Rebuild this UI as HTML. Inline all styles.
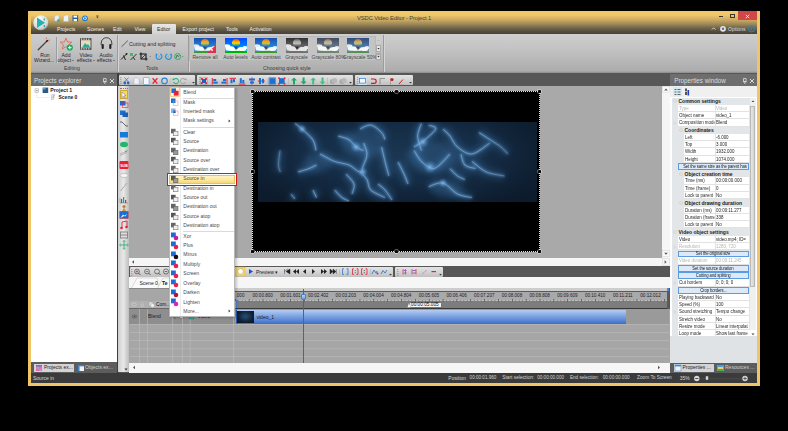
<!DOCTYPE html>
<html><head><meta charset="utf-8">
<style>
*{margin:0;padding:0;box-sizing:border-box}
html,body{width:788px;height:431px;overflow:hidden;background:#000;font-family:"Liberation Sans",sans-serif}
.a{position:absolute}
.t{position:absolute;white-space:nowrap;line-height:1}
svg{position:absolute;overflow:visible}
#win{left:28px;top:11px;width:732px;height:374.6px;background:#f0c665}
#title{left:31px;top:11px;width:726px;height:23px;background:linear-gradient(#f2c96a 0%,#efc768 18%,#c9a862 40%,#9a8656 58%,#6c6149 76%,#4f493b 92%,#47433a 100%)}
#ribbon{left:31px;top:34px;width:726px;height:39px;background:linear-gradient(#cecece,#c2c2c2 40%,#adadad 95%,#8a8a8a)}
#band{left:31px;top:73px;width:726px;height:300px;background:#575757}
#status{left:31px;top:373px;width:726px;height:9.5px;background:#3b3b3b}
.tab{font-size:5.1px;color:#f4f0e8;top:27.2px}
.rb{font-size:5.05px;color:#28242e;text-align:center}
.gl{font-size:5.2px;color:#3c3c3c;top:66px}
.sep{position:absolute;width:1px;background:#9c9c9c;box-shadow:1px 0 0 #d4d4d4}
.th{position:absolute;width:22px;height:15px;top:38px}
.thl{font-size:5px;color:#444;top:55px;text-align:center;width:31px}
/* projects explorer */
#pehead{left:31px;top:74px;width:86px;height:12px;background:#6e6e6e}
#petree{left:31px;top:86px;width:86px;height:276px;background:#fff}
#petabs{left:31px;top:362px;width:86px;height:11px;background:#5d5d5d}
/* center */
#vstrip{left:118px;top:86px;width:11px;height:286px;background:linear-gradient(90deg,#cfcfcf,#e8e8e8 50%,#bdbdbd)}
#canvas{left:129px;top:86px;width:533px;height:171.5px;background:#a9a9a9}
#vscroll{left:662px;top:86px;width:8px;height:171.5px;background:#f6f6f6}
#hscroll{left:129px;top:257.5px;width:541px;height:8.2px;background:#f6f6f6}
#tlband{left:129px;top:265.7px;width:541px;height:11.3px;background:#575757}
#tltabs{left:129px;top:277px;width:541px;height:10.5px;background:#f6f6f6}
#ruler{left:129px;top:289px;width:540px;height:13px;background:#8c8c8c}
#trhead{left:129px;top:302px;width:540px;height:8px;background:#9d9d9d}
#tracks{left:129px;top:310px;width:540px;height:53px;background:#a3a3a3}
#hscroll2{left:129px;top:363px;width:541px;height:9.5px;background:#f6f6f6}
/* properties */
#prhead{left:670px;top:74px;width:87px;height:12px;background:#6e6e6e}
#prtool{left:670px;top:86px;width:87px;height:11px;background:#f0f0f0}
#prgrid{left:670px;top:97px;width:87px;height:239px;background:#fff}
#prdesc{left:670px;top:336px;width:87px;height:27px;background:#dfe3e6}
#prtabs{left:670px;top:363px;width:87px;height:10px;background:#5d5d5d}
/* preview */
#prev{left:251.8px;top:91.2px;width:288.5px;height:161px;background:#000;border:1px dotted #e4e4e4}
#vid{left:258px;top:122px;width:279px;height:80px;background:radial-gradient(ellipse at 50% 40%,#2a4866,#1b2d42 60%,#14202f)}
/* menu */
#menu{left:168px;top:87px;width:67px;height:230px;background:#fff;border:1px solid #c8c8c8}
</style></head><body>
<svg width="0" height="0" style="position:absolute">
<defs>
<linearGradient id="sky" x1="0" y1="0" x2="0" y2="1"><stop offset="0" stop-color="#1450b0"/><stop offset="0.6" stop-color="#2f82d8"/><stop offset="1" stop-color="#7ab8ec"/></linearGradient>
<linearGradient id="bal" x1="0" y1="0" x2="1" y2="0"><stop offset="0" stop-color="#e03030"/><stop offset="0.3" stop-color="#f0a020"/><stop offset="0.5" stop-color="#f0e040"/><stop offset="0.7" stop-color="#40b060"/><stop offset="1" stop-color="#2050c0"/></linearGradient>
<linearGradient id="balv" x1="0" y1="0" x2="0" y2="1"><stop offset="0" stop-color="#e84a28"/><stop offset="0.3" stop-color="#f0a828"/><stop offset="0.5" stop-color="#b8c838"/><stop offset="0.72" stop-color="#3a80c8"/><stop offset="1" stop-color="#1a2a60"/></linearGradient>
<symbol id="balloon" viewBox="0 0 22 15">
<rect width="22" height="15" fill="url(#sky)"/>
<g fill="#f4f8fc"><ellipse cx="2" cy="8" rx="3.4" ry="1.8" opacity="0.9"/><ellipse cx="5" cy="10.5" rx="4.5" ry="2.2"/><ellipse cx="10" cy="12" rx="4" ry="1.6"/><ellipse cx="17" cy="11" rx="4.2" ry="2"/><ellipse cx="20" cy="9.6" rx="2.6" ry="1.6" opacity="0.9"/></g>
<path d="M0 13.2 Q11 12.2 22 13.2 V15 H0Z" fill="#3a9a30"/>
<path d="M6.9 5 A4.1 4.3 0 0 1 15.1 5 Q15 7.6 12.2 9.4 L11.6 10.4 H10.4 L9.8 9.4 Q7 7.6 6.9 5Z" fill="url(#balv)"/>
<rect x="10.3" y="10.4" width="1.4" height="1.2" fill="#503020"/>
</symbol>
</defs>
</svg>
<div class="a" id="win"></div>
<div class="a" id="title"></div>
<!-- logo -->
<svg style="left:33px;top:15px" width="16" height="16" viewBox="0 0 16 16">
<defs><radialGradient id="lg" cx="0.4" cy="0.3" r="0.8"><stop offset="0" stop-color="#ffffff"/><stop offset="0.7" stop-color="#d8d8d8"/><stop offset="1" stop-color="#8a8a8a"/></radialGradient></defs>
<circle cx="7.8" cy="7.7" r="7.5" fill="url(#lg)"/>
<path d="M4 2.5 L12 7.7 L4 13Z" fill="#26b3b0"/>
<rect x="10.6" y="3.4" width="1.4" height="2" fill="#26b3b0"/><rect x="10.6" y="10" width="1.4" height="2" fill="#26b3b0"/>
</svg>
<!-- quick access -->
<svg style="left:54px;top:15px" width="50" height="8" viewBox="0 0 50 8">
<path d="M0.5 1.5 L3 0 H5 V6 H0.5Z" fill="#e8eef4" stroke="#aab" stroke-width="0.4"/><circle cx="4.6" cy="5.6" r="1.6" fill="#3cb878"/>
<path d="M9.5 1.5 L12 0 H14.5 V6.5 H9.5Z" fill="#eef2f6" stroke="#aab" stroke-width="0.4"/>
<rect x="18.5" y="0.3" width="5.6" height="6" fill="#1a5fb4"/><rect x="19.5" y="0.6" width="3.6" height="2" fill="#fff"/><rect x="19.6" y="4" width="3.4" height="2.2" fill="#fff"/>
<circle cx="31" cy="3.3" r="2.9" fill="#1a78d8"/><circle cx="31" cy="3.3" r="1.8" fill="#f4f8ff"/><path d="M30.2 1.9 L32.6 3.3 L30.2 4.7Z" fill="#1a78d8"/>
<path d="M42.2 1.6 H44.6 L43.4 3.2Z" fill="#333"/><rect x="42.2" y="0.6" width="2.4" height="0.5" fill="#333"/>
</svg>
<div class="t" style="left:357px;top:15.7px;font-size:5.9px;color:#4a4133;letter-spacing:-0.15px">VSDC Video Editor - Project 1</div>
<!-- window buttons -->
<div class="a" style="left:719px;top:16px;width:4px;height:1.2px;background:#3a3530"></div>
<div class="a" style="left:730px;top:14.2px;width:4.8px;height:3.6px;border:0.7px solid #3a3530;border-top-width:1.3px"></div>
<div class="a" style="left:738px;top:11px;width:19px;height:9px;background:#cf4848"></div>
<svg style="left:745px;top:13.5px" width="5" height="5" viewBox="0 0 5 5"><path d="M0.8 0.8 L4.2 4.2 M4.2 0.8 L0.8 4.2" stroke="#fff" stroke-width="0.8"/></svg>
<!-- tabs -->
<div class="a" style="left:152px;top:24px;width:24px;height:10px;background:linear-gradient(#e6e6e6,#d2d2d2);border-radius:1px 1px 0 0"></div>
<div class="t tab" style="left:57px">Projects</div>
<div class="t tab" style="left:87px">Scenes</div>
<div class="t tab" style="left:113px">Edit</div>
<div class="t tab" style="left:134.5px">View</div>
<div class="t tab" style="left:157px;color:#2a2a2a">Editor</div>
<div class="t tab" style="left:182.5px">Export project</div>
<div class="t tab" style="left:226px">Tools</div>
<div class="t tab" style="left:249.5px">Activation</div>
<!-- options -->
<svg style="left:711px;top:25px" width="46" height="8" viewBox="0 0 46 8">
<path d="M0.8 4.6 L2.6 2.8 L4.4 4.6" stroke="#ddd" stroke-width="0.9" fill="none"/>
<circle cx="12" cy="3.8" r="2.9" fill="#e4e4ec"/><circle cx="12" cy="3.8" r="1.2" fill="#6a6a80"/>
<circle cx="40.5" cy="3.8" r="3.1" fill="none" stroke="#2a86c8" stroke-width="1"/><rect x="40" y="2.6" width="1" height="2.6" fill="#2a86c8"/>
</svg>
<div class="t tab" style="left:728px;top:27px;color:#d8d8d8">Options</div>

<div class="a" id="ribbon"></div>
<!-- Editing group -->
<svg style="left:37px;top:37px" width="14" height="14" viewBox="0 0 14 14">
<path d="M1.2 12.8 L10.4 3.6" stroke="#404040" stroke-width="1.3" stroke-linecap="round"/>
<path d="M9.2 4.8 L10.8 3.2" stroke="#222" stroke-width="1.6"/>
<circle cx="9.4" cy="1.2" r="0.6" fill="#e05030"/><circle cx="12.2" cy="3.2" r="0.6" fill="#e05030"/><circle cx="11.6" cy="5" r="0.5" fill="#f08050"/><circle cx="8" cy="2.6" r="0.4" fill="#f08050"/>
</svg>
<div class="t rb" style="left:34px;top:52.5px;width:22px">Run</div>
<div class="t rb" style="left:33px;top:58px;width:22px">Wizard...</div>
<div class="sep" style="left:56px;top:37px;height:26px"></div>
<svg style="left:60px;top:37px" width="14" height="14" viewBox="0 0 14 14">
<path d="M6 1 L7.6 5 L11.8 5.2 L8.5 7.8 L9.7 12 L6 9.6 L2.3 12 L3.5 7.8 L0.3 5.2 L4.4 5Z" fill="none" stroke="#e86a4a" stroke-width="0.9"/>
<circle cx="9.8" cy="10.6" r="3.1" fill="#1fa860"/><path d="M9.8 8.9 V12.3 M8.1 10.6 H11.5" stroke="#fff" stroke-width="1"/>
</svg>
<div class="t rb" style="left:55px;top:52.5px;width:22px">Add</div>
<div class="t rb" style="left:55px;top:58px;width:22px">object<i style="display:inline-block;width:0;height:0;border-left:1.2px solid transparent;border-right:1.2px solid transparent;border-top:1.4px solid #444;margin-left:1.4px;vertical-align:1.2px"></i></div>
<svg style="left:80px;top:38px" width="12" height="12" viewBox="0 0 12 12">
<rect x="0" y="0" width="11.5" height="12" rx="0.8" fill="#555"/>
<rect x="1" y="2.2" width="9.5" height="7.6" fill="#e8dcb8"/>
<path d="M2 9.8 L5 5 L7 7 L8 6 L10.5 9.8Z" fill="#2aa8a0"/>
<g fill="#fff"><rect x="1" y="0.6" width="1.2" height="1"/><rect x="3.4" y="0.6" width="1.2" height="1"/><rect x="5.8" y="0.6" width="1.2" height="1"/><rect x="8.2" y="0.6" width="1.2" height="1"/>
<rect x="1" y="10.4" width="1.2" height="1"/><rect x="3.4" y="10.4" width="1.2" height="1"/><rect x="5.8" y="10.4" width="1.2" height="1"/><rect x="8.2" y="10.4" width="1.2" height="1"/></g>
</svg>
<div class="t rb" style="left:75px;top:52.5px;width:22px">Video</div>
<div class="t rb" style="left:75px;top:58px;width:22px">effects<i style="display:inline-block;width:0;height:0;border-left:1.2px solid transparent;border-right:1.2px solid transparent;border-top:1.4px solid #444;margin-left:1.4px;vertical-align:1.2px"></i></div>
<svg style="left:100px;top:37px" width="13" height="13" viewBox="0 0 13 13">
<path d="M1.2 8 V6 A5.3 5.3 0 0 1 11.8 6 V8" fill="none" stroke="#333" stroke-width="0.9"/>
<rect x="1.6" y="7" width="2.2" height="5" rx="1" fill="#222"/><rect x="9.2" y="7" width="2.2" height="5" rx="1" fill="#222"/>
</svg>
<div class="t rb" style="left:95px;top:52.5px;width:22px">Audio</div>
<div class="t rb" style="left:95px;top:58px;width:22px">effects<i style="display:inline-block;width:0;height:0;border-left:1.2px solid transparent;border-right:1.2px solid transparent;border-top:1.4px solid #444;margin-left:1.4px;vertical-align:1.2px"></i></div>
<div class="t gl" style="left:64px">Editing</div>
<div class="sep" style="left:117px;top:35px;height:37px"></div>
<!-- Tools group -->
<svg style="left:121px;top:40px" width="8" height="8" viewBox="0 0 8 8"><path d="M0.5 6.8 L6 1.4" stroke="#555" stroke-width="0.9"/><circle cx="6.4" cy="1" r="0.7" fill="#e86040"/></svg>
<div class="t" style="left:129px;top:41.5px;font-size:5.3px;color:#2e2a36">Cutting and splitting</div>
<svg style="left:120px;top:52px" width="66" height="9" viewBox="0 0 66 9">
<path d="M1 7.5 L7 1.5 M3.5 3.5 L5.5 8" stroke="#222" stroke-width="1"/><circle cx="6.5" cy="2" r="0.9" fill="#222"/>
<rect x="10" y="1" width="3" height="3" fill="#40b870"/><path d="M10.5 8 L16.5 2 M13 5 L15 8" stroke="#222" stroke-width="0.9"/>
<path d="M21 0.5 V7 H27.5 M19.5 2 H26 V8.5" stroke="#111" stroke-width="1.1" fill="none"/><path d="M21.5 6.5 L25.5 2.5" stroke="#111" stroke-width="0.7"/>
<path d="M29.5 4.2 H31 L30.25 5Z" fill="#555"/>
<path d="M40.2 1.9 A2.9 2.9 0 1 1 36.6 3" fill="none" stroke="#1a8fe0" stroke-width="1.1"/><path d="M36 1.2 L37.8 2.6 L35.6 3.8Z" fill="#1a8fe0"/><rect x="38.4" y="3.5" width="1.6" height="2.2" fill="#aaa"/>
<path d="M47.3 1.9 A2.9 2.9 0 1 0 50.9 3" fill="none" stroke="#1a8fe0" stroke-width="1.1"/><path d="M51.5 1.2 L49.7 2.6 L51.9 3.8Z" fill="#1a8fe0"/><rect x="47.5" y="3.5" width="1.6" height="2.2" fill="#aaa"/>
<circle cx="57.7" cy="4.5" r="3" fill="none" stroke="#20b868" stroke-width="1"/><path d="M56 6 L57.2 3 L58.4 4.6 L59.4 3.4" fill="none" stroke="#555" stroke-width="0.9"/>
<path d="M62 4.2 H63.5 L62.75 5Z" fill="#555"/>
</svg>
<div class="t gl" style="left:146px">Tools</div>
<div class="sep" style="left:187.5px;top:35px;height:37px"></div>
<!-- quick style group -->
<div class="a" style="left:189px;top:36px;width:187px;height:25px;border:1px solid #b8b8b8;background:#c4c4c4"></div>
<svg class="th" style="left:194px" viewBox="0 0 22 15"><use href="#balloon"/><path d="M13 15 L22 7 V15Z" fill="#e0304a"/><path d="M16.8 10.8 L19 13 M19 10.8 L16.8 13" stroke="#fff" stroke-width="0.8"/></svg>
<svg class="th" style="left:224.5px;filter:saturate(1.5) contrast(1.25)" viewBox="0 0 22 15"><use href="#balloon"/></svg>
<svg class="th" style="left:255px" viewBox="0 0 22 15"><use href="#balloon"/></svg>
<svg class="th" style="left:286px;filter:grayscale(1) contrast(1.35) brightness(0.9)" viewBox="0 0 22 15"><use href="#balloon"/></svg>
<svg class="th" style="left:316.5px;filter:grayscale(0.8)" viewBox="0 0 22 15"><use href="#balloon"/></svg>
<svg class="th" style="left:347px;filter:grayscale(0.5)" viewBox="0 0 22 15"><use href="#balloon"/></svg>
<div class="t thl" style="left:189.5px">Remove all</div>
<div class="t thl" style="left:220px">Auto levels</div>
<div class="t thl" style="left:250.5px">Auto contrast</div>
<div class="t thl" style="left:281px">Grayscale</div>
<div class="t thl" style="left:311.5px">Grayscale 80%</div>
<div class="t thl" style="left:343px">Grayscale 50%</div>
<div class="a" style="left:376px;top:36px;width:5px;height:8px;background:#cdcdcd"></div>
<div class="a" style="left:376px;top:45px;width:5px;height:7px;background:#e6e6e6;border:0.5px solid #aaa"></div>
<div class="a" style="left:376px;top:53px;width:5px;height:7px;background:#e6e6e6;border:0.5px solid #aaa"></div>
<svg style="left:376px;top:36px" width="5" height="24" viewBox="0 0 5 24"><path d="M1.5 5 L2.5 4 L3.5 5" stroke="#999" stroke-width="0.5" fill="none"/><path d="M1.3 12 H3.7 L2.5 13.4Z" fill="#333"/><path d="M1.3 20 H3.7 L2.5 21.4Z" fill="#333"/><rect x="1.3" y="18.6" width="2.4" height="0.5" fill="#333"/></svg>
<div class="t gl" style="left:263px">Choosing quick style</div>
<div class="sep" style="left:383px;top:35px;height:37px"></div>

<div class="a" id="band"></div>
<div class="a" id="status"></div>
<div class="a" id="pehead"></div>
<div class="t" style="left:34px;top:77.8px;font-size:6.3px;color:#dedede">Projects explorer</div>
<svg style="left:102px;top:77.5px" width="14" height="7" viewBox="0 0 14 7"><rect x="1.6" y="0.6" width="2.4" height="3" fill="none" stroke="#ddd" stroke-width="0.8"/><path d="M1 3.8 H4.6 M2.8 3.8 V6" stroke="#ddd" stroke-width="0.8"/><path d="M8 1 L12 5 M12 1 L8 5" stroke="#e8e8e8" stroke-width="0.9"/></svg>
<div class="a" id="petree"></div>
<svg style="left:34px;top:87px" width="26" height="14" viewBox="0 0 26 14"><rect x="1" y="1.8" width="3.6" height="3.6" fill="#f4f4f4" stroke="#9a9a9a" stroke-width="0.5"/><path d="M1.8 3.6 H3.8" stroke="#555" stroke-width="0.5"/><path d="M2.8 5.6 V10.5 H16" stroke="#bbb" stroke-width="0.5" stroke-dasharray="0.6 0.6" fill="none"/><rect x="8.6" y="0.6" width="5.6" height="5.4" fill="#2a5a8a"/><rect x="9" y="1.2" width="2.4" height="1.2" fill="#7ab0e0"/><path d="M17.5 8 L20 7.2 V12 L17.5 12.8Z" fill="#eaeef2" stroke="#8a96a6" stroke-width="0.4"/><path d="M18.4 11 L20.8 7.5" stroke="#556" stroke-width="0.4"/></svg>
<div class="t" style="left:50.3px;top:87.8px;font-size:5.2px;font-weight:bold;color:#1a1a28">Project 1</div>
<div class="t" style="left:58.5px;top:94.6px;font-size:5px;font-weight:bold;color:#1a1a28">Scene 0</div>
<div class="a" id="petabs"></div>
<div class="a" style="left:34px;top:363.6px;width:40px;height:8.6px;background:#d4d4d4"></div>
<svg style="left:36px;top:364.8px" width="50" height="7" viewBox="0 0 50 7"><rect x="0" y="0" width="6" height="6" fill="#e86ab0"/><rect x="0" y="0" width="6" height="1.4" fill="#3a8ad8"/><rect x="0.8" y="2.2" width="2" height="1.4" fill="#6ad0e8"/><rect x="3.2" y="4" width="2" height="1.4" fill="#6ad0e8"/><rect x="42" y="0" width="6" height="6" fill="#eef4fa"/><rect x="42" y="0" width="6" height="1.4" fill="#3a8ad8"/><rect x="42" y="0" width="1.6" height="6" fill="#3a8ad8"/></svg>
<div class="t" style="left:44px;top:365.4px;font-size:5px;color:#1e1e1e">Projects ex...</div>
<div class="t" style="left:85px;top:365.4px;font-size:5px;color:#cfcfcf">Objects ex...</div>
<div class="t" style="left:33px;top:376px;font-size:5px;color:#d8d8d8">Source in</div>
<div class="a" style="left:117px;top:73px;width:1.5px;height:300px;background:#3e3e3e"></div>
<div class="a" style="left:118.7px;top:75px;width:76.8px;height:10.299999999999997px;background:linear-gradient(#e4e4e4,#d0d0d0 60%,#c0c0c0);border-radius:1px"></div>
<svg style="left:120.2px;top:77px" width="2" height="7" viewBox="0 0 2 7"><g fill="#777"><rect x="0.3" y="0" width="1" height="0.8"/><rect x="0.3" y="2" width="1" height="0.8"/><rect x="0.3" y="4" width="1" height="0.8"/><rect x="0.3" y="6" width="1" height="0.8"/></g></svg>
<svg style="left:191.5px;top:81.3px" width="3" height="3" viewBox="0 0 3 3"><path d="M0.2 1 H2.8 L1.5 2.6Z" fill="#333"/></svg>
<div class="a" style="left:197px;top:75px;width:156px;height:10.299999999999997px;background:linear-gradient(#e4e4e4,#d0d0d0 60%,#c0c0c0);border-radius:1px"></div>
<svg style="left:198.5px;top:77px" width="2" height="7" viewBox="0 0 2 7"><g fill="#777"><rect x="0.3" y="0" width="1" height="0.8"/><rect x="0.3" y="2" width="1" height="0.8"/><rect x="0.3" y="4" width="1" height="0.8"/><rect x="0.3" y="6" width="1" height="0.8"/></g></svg>
<svg style="left:349px;top:81.3px" width="3" height="3" viewBox="0 0 3 3"><path d="M0.2 1 H2.8 L1.5 2.6Z" fill="#333"/></svg>
<div class="a" style="left:355px;top:75px;width:58px;height:10.299999999999997px;background:linear-gradient(#e4e4e4,#d0d0d0 60%,#c0c0c0);border-radius:1px"></div>
<svg style="left:356.5px;top:77px" width="2" height="7" viewBox="0 0 2 7"><g fill="#777"><rect x="0.3" y="0" width="1" height="0.8"/><rect x="0.3" y="2" width="1" height="0.8"/><rect x="0.3" y="4" width="1" height="0.8"/><rect x="0.3" y="6" width="1" height="0.8"/></g></svg>
<svg style="left:409px;top:81.3px" width="3" height="3" viewBox="0 0 3 3"><path d="M0.2 1 H2.8 L1.5 2.6Z" fill="#333"/></svg>
<svg style="left:123px;top:76.5px" width="70" height="8" viewBox="0 0 70 8">
<path d="M1.5 0.5 L5.5 5 M5.5 0.5 L1.5 5" stroke="#3a7ad0" stroke-width="0.8"/><circle cx="1.8" cy="6" r="1.4" fill="#2a6ac8"/><circle cx="5.2" cy="6" r="1.4" fill="#2a6ac8"/>
<path d="M11 1 H14.5 L16 2.5 V7.2 H11Z" fill="#eef2f8" stroke="#9ab" stroke-width="0.4"/>
<rect x="20.5" y="0.5" width="5.6" height="7" rx="0.6" fill="#f4f8fc" stroke="#5a9ad8" stroke-width="0.6"/>
<path d="M29.6 1.2 L34.4 6.6 M34.4 1.2 L29.6 6.6" stroke="#e8203a" stroke-width="1.3"/>
<circle cx="41.5" cy="3.9" r="2.8" fill="none" stroke="#2a82d4" stroke-width="1.1"/>
<rect x="47" y="1" width="0.6" height="6" fill="#bbb"/>
<path d="M51 2.5 A2.6 2.6 0 1 1 50.6 5" stroke="#20a860" stroke-width="1" fill="none"/><path d="M49.6 1 L51.6 2.6 L49.6 3.6Z" fill="#20a860"/>
<path d="M62 2.5 A2.6 2.6 0 1 0 62.4 5" stroke="#9a9a9a" stroke-width="0.9" fill="none"/><path d="M63.4 1 L61.4 2.6 L63.4 3.6Z" fill="#9a9a9a"/>
</svg>
<svg style="left:200px;top:76.5px" width="150" height="8" viewBox="0 0 150 8">
<path d="M0.5 0.5 H7.5 V7.5 H0.5Z" fill="none" stroke="#333" stroke-width="0.35" stroke-dasharray="0.6 0.6"/><rect x="2" y="2" width="4" height="4" fill="#1a5fc8"/><g fill="#e8203a"><rect x="1" y="1" width="1.8" height="1.8"/><rect x="5.2" y="1" width="1.8" height="1.8"/><rect x="1" y="5.2" width="1.8" height="1.8"/><rect x="5.2" y="5.2" width="1.8" height="1.8"/></g>
<rect x="11.8" y="1" width="1" height="6.5" fill="#e8203a"/><rect x="13.2" y="2" width="3" height="2" fill="#1a6fd0"/><rect x="13.2" y="4.6" width="4.5" height="2" fill="#1a6fd0"/>
<rect x="26.5" y="1" width="1" height="6.5" fill="#e8203a"/><rect x="23" y="2" width="3" height="2" fill="#1a6fd0"/><rect x="21.5" y="4.6" width="4.5" height="2" fill="#1a6fd0"/>
<rect x="29.5" y="0.8" width="6.5" height="1" fill="#e8203a"/><rect x="30.5" y="2.2" width="2" height="4" fill="#1a6fd0"/><rect x="33" y="2.2" width="2" height="3" fill="#1a6fd0"/>
<rect x="38.8" y="6.6" width="6.5" height="1" fill="#e8203a"/><rect x="39.8" y="1.2" width="2" height="5" fill="#1a6fd0"/><rect x="42.3" y="3" width="2" height="3.4" fill="#1a6fd0"/>
<rect x="51.4" y="0.5" width="1" height="7" fill="#e8203a"/><rect x="49" y="1.5" width="6" height="2" fill="#1a6fd0"/><rect x="50" y="4.5" width="4" height="2" fill="#1a6fd0"/>
<rect x="57.8" y="3.5" width="7" height="1" fill="#e8203a"/><rect x="59" y="1" width="2" height="6" fill="#1a6fd0"/><rect x="62" y="1.8" width="2" height="4.4" fill="#1a6fd0"/>
<rect x="67.6" y="1" width="0.5" height="6" fill="#aaa"/>
<rect x="69.5" y="1.2" width="5.6" height="5.6" fill="#1a6fd0"/><path d="M69 0.7 H75.6 V7.3 H69Z" fill="none" stroke="#1a4fb0" stroke-width="0.5"/>
<rect x="79" y="1.2" width="5.6" height="5.6" fill="#1a6fd0"/><g fill="#e8203a"><rect x="78.2" y="0.4" width="1.6" height="1.6"/><rect x="83.8" y="0.4" width="1.6" height="1.6"/><rect x="78.2" y="6" width="1.6" height="1.6"/><rect x="83.8" y="6" width="1.6" height="1.6"/></g>
<rect x="88.5" y="1" width="0.5" height="6" fill="#aaa"/>
<path d="M94 0.5 L97 3.5 H95 V7.5 H93 V3.5 H91Z" fill="#20a860"/>
<path d="M103.6 7.5 L106.6 4.5 H104.6 V0.5 H102.6 V4.5 H100.6Z" fill="#20a860"/>
<path d="M113.2 0.5 L116 3.2 H114.2 V7.5 H112.2 V3.2 H110.4Z" fill="#40c080"/>
<path d="M122.5 7.5 L125.3 4.8 H123.5 V0.5 H121.5 V4.8 H119.7Z" fill="#40c080"/>
<rect x="127.5" y="1" width="0.5" height="6" fill="#aaa"/>
<circle cx="132.5" cy="4.5" r="2.6" fill="#a8a8a8"/><circle cx="134.5" cy="3.5" r="2.6" fill="#b8b8b8"/>
<circle cx="142" cy="4.5" r="2.6" fill="#a8a8a8"/><circle cx="144" cy="3.5" r="2.6" fill="#b8b8b8"/>
</svg>
<svg style="left:358px;top:76.5px" width="55" height="8" viewBox="0 0 55 8">
<rect x="0.5" y="0" width="8" height="8" fill="#cfe4f6"/><rect x="1.5" y="1.5" width="6" height="4.6" fill="#f4f8fc" stroke="#2a7ad0" stroke-width="0.7"/>
<path d="M13 2 H16 A2.2 2.2 0 0 1 16 6.4 H13" stroke="#c02020" stroke-width="1.2" fill="none"/>
<path d="M22 7 V1.5 H27" stroke="#666" stroke-width="0.6" fill="none"/>
<path d="M32.5 7.5 V1.2" stroke="#777" stroke-width="0.5"/><circle cx="34" cy="2.6" r="1.6" fill="#d02020"/>
<path d="M41 7 L45 2.5" stroke="#d02020" stroke-width="1"/><path d="M40.5 7.5 H46" stroke="#aaa" stroke-width="0.4"/>
</svg>
<div class="a" id="vstrip"></div>
<div class="a" style="left:119.5px;top:88px;width:8px;height:0.8px;border-top:0.8px dotted #777"></div>
<div class="a" style="left:119.5px;top:90px;width:8.5px;height:8.5px;background:#f8d860;border:0.5px solid #d0a830"></div>
<svg style="left:119px;top:90px" width="10" height="160" viewBox="0 0 10 160">
<path d="M3 2 L7 5.5 L5 5.8 L6.2 8 L5.4 8.4 L4.3 6.3 L3 7.5Z" fill="#fff" stroke="#555" stroke-width="0.4"/>
<rect x="1" y="11" width="5.5" height="4.5" fill="#1a6fd0"/><rect x="3.5" y="13" width="5.5" height="4.5" fill="none" stroke="#e8203a" stroke-width="0.6"/>
<rect x="1" y="20.5" width="5.5" height="4.5" fill="#1a6fd0"/><rect x="3.5" y="22.5" width="5.5" height="4.5" fill="#1a5fb8"/>
<path d="M1 32 Q3 31 5 34 Q7 37 9 36" stroke="#333" stroke-width="0.7" fill="none"/>
<rect x="1" y="42" width="8" height="5.5" fill="#1a7ad8"/>
<ellipse cx="5" cy="54.5" rx="4" ry="2.8" fill="#20b868"/>
<path d="M1 64 L8 61 M1 65.5 L8 62.5" stroke="#888" stroke-width="0.5"/><path d="M6 62 L8.5 60.5" stroke="#20a860" stroke-width="0.8"/>
<rect x="0.5" y="71" width="9" height="8" rx="1" fill="#e8203a"/><text x="5" y="77" font-size="3.6" font-family="Liberation Sans" font-weight="bold" fill="#fff" text-anchor="middle">SUB</text>
<ellipse cx="5" cy="85.5" rx="3.8" ry="2.2" fill="#f4f4f4" stroke="#888" stroke-width="0.4"/>
<path d="M1.5 101 L8 93" stroke="#aaa" stroke-width="1"/>
<path d="M1 108 V113 H9" stroke="#555" stroke-width="0.4" fill="none"/><rect x="2" y="109" width="1.2" height="4" fill="#1a6fd0"/><rect x="4" y="107" width="1.2" height="6" fill="#20a860"/><rect x="6" y="110" width="1.2" height="3" fill="#e8203a"/>
<circle cx="5" cy="116.5" r="1.6" fill="#c08030"/><path d="M2 123 L5 117.5 L8 123Z" fill="#d09040"/>
<rect x="0.8" y="121.5" width="8.4" height="7" fill="#1a6fd0" stroke="#c02040" stroke-width="0.5"/><path d="M1.5 128 L4 124.5 L6 126.5 L8.5 124Z" fill="#fff"/>
<path d="M3 138 V132 L8 131 V137" stroke="#e8203a" stroke-width="0.9" fill="none"/><circle cx="2.5" cy="138" r="1.3" fill="#e8203a"/><circle cx="7.5" cy="137" r="1.3" fill="#e8203a"/>
<rect x="1" y="141.5" width="8" height="7" fill="#888"/><rect x="2" y="142.5" width="6" height="2" fill="#ddd"/><rect x="2" y="145.5" width="6" height="2" fill="#ddd"/>
<path d="M5 150.5 V159 M0.8 155 H9.2" stroke="#40b080" stroke-width="1"/><path d="M3.6 152 L5 150.3 L6.4 152 M3.6 157.8 L5 159.5 L6.4 157.8 M2 153.6 L0.5 155 L2 156.4 M8 153.6 L9.5 155 L8 156.4" stroke="#40b080" stroke-width="0.7" fill="none"/>
</svg>
<svg style="left:124px;top:368px" width="4" height="3" viewBox="0 0 4 3"><path d="M0.5 0.5 H3.5 L2 2.5Z" fill="#333"/></svg>
<div class="a" id="canvas"></div>
<div class="a" id="vscroll"></div>
<svg style="left:662px;top:86px" width="8" height="172" viewBox="0 0 8 172"><rect x="0.6" y="0.6" width="6.8" height="6" fill="#fafafa" stroke="#ccc" stroke-width="0.4"/><path d="M2.2 4.6 L4 2.6 L5.8 4.6Z" fill="#555"/><rect x="0.6" y="164.5" width="6.8" height="6" fill="#fafafa" stroke="#ccc" stroke-width="0.4"/><path d="M2.2 166.8 L4 168.8 L5.8 166.8Z" fill="#555"/></svg>
<div class="a" id="hscroll"></div>
<svg style="left:129px;top:258px" width="540" height="8" viewBox="0 0 540 8"><path d="M5 2.2 L3 4 L5 5.8Z" fill="#555"/><path d="M535.6 2.2 L537.6 4 L535.6 5.8Z" fill="#555"/><rect x="533.5" y="0.5" width="6.8" height="7" fill="none" stroke="#ccc" stroke-width="0.4"/></svg>
<div class="a" id="prev"></div>
<div class="a" id="vid"></div>
<svg style="left:258px;top:122px" width="279" height="80" viewBox="0 0 279 80">
<defs><radialGradient id="vbg" cx="0.5" cy="0.4" r="0.7"><stop offset="0" stop-color="#1b3652"/><stop offset="0.5" stop-color="#152c45"/><stop offset="1" stop-color="#0d1c2d"/></radialGradient>
<radialGradient id="glw"><stop offset="0" stop-color="#8ec4f4" stop-opacity="0.75"/><stop offset="1" stop-color="#4a88c0" stop-opacity="0"/></radialGradient>
<filter id="bl" x="-30%" y="-30%" width="160%" height="160%"><feGaussianBlur stdDeviation="3.2"/></filter>
<filter id="bm" x="-20%" y="-20%" width="140%" height="140%"><feGaussianBlur stdDeviation="1.1"/></filter>
<filter id="bl2" x="-20%" y="-20%" width="140%" height="140%"><feGaussianBlur stdDeviation="0.35"/></filter>
<linearGradient id="vfade" x1="0" y1="0" x2="1" y2="0"><stop offset="0" stop-color="#0c1a2a" stop-opacity="0.45"/><stop offset="0.15" stop-color="#0c1a2a" stop-opacity="0"/><stop offset="0.8" stop-color="#0c1a2a" stop-opacity="0"/><stop offset="1" stop-color="#0c1a2a" stop-opacity="0.45"/></linearGradient>
<clipPath id="vc"><rect width="279" height="80"/></clipPath></defs>
<rect width="279" height="80" fill="url(#vbg)"/>
<g filter="url(#bl)" fill="#3a6c9c" opacity="0.35"><ellipse cx="105" cy="22" rx="22" ry="14"/><ellipse cx="175" cy="35" rx="26" ry="16"/><ellipse cx="60" cy="40" rx="14" ry="10"/><ellipse cx="190" cy="68" rx="16" ry="8"/></g>
<g clip-path="url(#vc)">
<g filter="url(#bl)" stroke="#3f78b0" stroke-width="9" fill="none" stroke-opacity="0.32"><path d="M37 1.4 C38.2 2.3 41.0 4.2 44 7 C47.0 9.8 52.7 14.4 55 18 C57.3 21.6 57.5 26.8 58 28.5"/><path d="M62 32 C64.4 33.2 71.8 37.6 76.6 39.4 C81.4 41.2 86.8 41.2 91 43 C95.2 44.8 99.6 50.0 102 50 C104.4 50.0 104.3 46.0 105.5 43 C106.7 40.0 109.0 35.7 109 32 C109.0 28.3 106.1 22.8 105.5 21"/><path d="M22 28.5 C21.8 30.9 20.4 39.4 20.5 43 C20.6 46.6 22.0 48.8 22.3 50"/><path d="M40 50 C41.8 49.4 47.9 47.8 51 46.6 C54.1 45.4 57.2 43.6 58.5 43"/><path d="M80 14 C81.8 14.6 88.0 15.9 91 17.7 C94.0 19.5 95.6 23.2 98 25 C100.4 26.8 104.2 27.9 105.5 28.5"/><path d="M102 7 C103.8 6.3 109.1 2.4 112.7 3 C116.3 3.6 121.2 8.1 123.6 10.5 C126.0 12.9 126.4 16.5 127 17.7"/><path d="M102 50 C103.2 51.2 107.2 54.5 109 57.5 C110.8 60.5 109.7 65.0 112.7 68 C115.7 71.0 124.6 74.3 127 75.6"/><path d="M123.6 25 C124.2 27.4 125.8 34.6 127 39.4 C128.2 44.2 130.2 51.5 130.8 53.9"/><path d="M156 25 C157.8 23.8 163.4 20.7 167 17.7 C170.6 14.7 177.2 9.2 177.8 6.8 C178.4 4.4 171.8 3.8 170.6 3.2"/><path d="M156 28.5 C157.2 30.3 160.4 36.4 163.4 39.4 C166.4 42.4 171.0 46.0 174 46.6 C177.0 47.2 178.5 45.4 181.5 43 C184.5 40.6 190.2 33.8 192 32"/><path d="M163.4 1.4 C162.8 3.5 159.7 9.5 159.7 14 C159.7 18.5 162.8 26.1 163.4 28.5"/><path d="M185 7 C186.2 8.2 189.6 11.0 192 14 C194.4 17.0 195.8 22.0 199.5 25 C203.2 28.0 208.6 32.7 214 32 C219.4 31.3 229.0 22.8 232 21"/><path d="M170.6 64.7 C173.0 64.1 180.2 59.8 185 61 C189.8 62.2 194.7 69.6 199.5 72 C204.3 74.4 211.6 75.0 214 75.6"/><path d="M214 39.4 C216.4 41.2 223.1 47.6 228.5 50 C233.9 52.4 243.5 53.3 246.5 54"/><path d="M192 46.6 C193.2 47.8 197.0 52.2 199.5 54 C202.0 55.8 205.6 56.9 206.8 57.5"/><path d="M76.6 68 C77.8 69.3 81.6 73.8 84 75.6 C86.4 77.4 89.8 78.4 91 79"/><path d="M55 68 C55.6 69.3 57.9 74.3 58.5 75.6"/><path d="M33 72 C33.7 72.8 36.3 76.2 37 77"/><path d="M120 62 C121.2 63.0 124.7 65.3 127 68 C129.3 70.7 132.8 76.3 134 78"/><path d="M221 10.5 C222.8 11.7 228.3 15.3 232 17.7 C235.7 20.1 240.0 22.6 243 25 C246.0 27.4 248.8 30.8 250 32"/><path d="M203 32 C203.6 33.8 204.4 40.6 206.8 43 C209.2 45.4 215.8 46.0 217.6 46.6"/><path d="M140 40 C141.0 42.0 144.3 48.3 146 52 C147.7 55.7 149.3 60.3 150 62"/><path d="M88 52 C89.3 53.7 95.0 58.7 96 62 C97.0 65.3 94.3 70.3 94 72"/></g>
<g filter="url(#bm)" stroke="#6aa6dc" stroke-width="2.6" fill="none" stroke-opacity="0.55"><path d="M37 1.4 C38.2 2.3 41.0 4.2 44 7 C47.0 9.8 52.7 14.4 55 18 C57.3 21.6 57.5 26.8 58 28.5"/><path d="M62 32 C64.4 33.2 71.8 37.6 76.6 39.4 C81.4 41.2 86.8 41.2 91 43 C95.2 44.8 99.6 50.0 102 50 C104.4 50.0 104.3 46.0 105.5 43 C106.7 40.0 109.0 35.7 109 32 C109.0 28.3 106.1 22.8 105.5 21"/><path d="M22 28.5 C21.8 30.9 20.4 39.4 20.5 43 C20.6 46.6 22.0 48.8 22.3 50"/><path d="M40 50 C41.8 49.4 47.9 47.8 51 46.6 C54.1 45.4 57.2 43.6 58.5 43"/><path d="M80 14 C81.8 14.6 88.0 15.9 91 17.7 C94.0 19.5 95.6 23.2 98 25 C100.4 26.8 104.2 27.9 105.5 28.5"/><path d="M102 7 C103.8 6.3 109.1 2.4 112.7 3 C116.3 3.6 121.2 8.1 123.6 10.5 C126.0 12.9 126.4 16.5 127 17.7"/><path d="M102 50 C103.2 51.2 107.2 54.5 109 57.5 C110.8 60.5 109.7 65.0 112.7 68 C115.7 71.0 124.6 74.3 127 75.6"/><path d="M123.6 25 C124.2 27.4 125.8 34.6 127 39.4 C128.2 44.2 130.2 51.5 130.8 53.9"/><path d="M156 25 C157.8 23.8 163.4 20.7 167 17.7 C170.6 14.7 177.2 9.2 177.8 6.8 C178.4 4.4 171.8 3.8 170.6 3.2"/><path d="M156 28.5 C157.2 30.3 160.4 36.4 163.4 39.4 C166.4 42.4 171.0 46.0 174 46.6 C177.0 47.2 178.5 45.4 181.5 43 C184.5 40.6 190.2 33.8 192 32"/><path d="M163.4 1.4 C162.8 3.5 159.7 9.5 159.7 14 C159.7 18.5 162.8 26.1 163.4 28.5"/><path d="M185 7 C186.2 8.2 189.6 11.0 192 14 C194.4 17.0 195.8 22.0 199.5 25 C203.2 28.0 208.6 32.7 214 32 C219.4 31.3 229.0 22.8 232 21"/><path d="M170.6 64.7 C173.0 64.1 180.2 59.8 185 61 C189.8 62.2 194.7 69.6 199.5 72 C204.3 74.4 211.6 75.0 214 75.6"/><path d="M214 39.4 C216.4 41.2 223.1 47.6 228.5 50 C233.9 52.4 243.5 53.3 246.5 54"/><path d="M192 46.6 C193.2 47.8 197.0 52.2 199.5 54 C202.0 55.8 205.6 56.9 206.8 57.5"/><path d="M76.6 68 C77.8 69.3 81.6 73.8 84 75.6 C86.4 77.4 89.8 78.4 91 79"/><path d="M55 68 C55.6 69.3 57.9 74.3 58.5 75.6"/><path d="M33 72 C33.7 72.8 36.3 76.2 37 77"/><path d="M120 62 C121.2 63.0 124.7 65.3 127 68 C129.3 70.7 132.8 76.3 134 78"/><path d="M221 10.5 C222.8 11.7 228.3 15.3 232 17.7 C235.7 20.1 240.0 22.6 243 25 C246.0 27.4 248.8 30.8 250 32"/><path d="M203 32 C203.6 33.8 204.4 40.6 206.8 43 C209.2 45.4 215.8 46.0 217.6 46.6"/><path d="M140 40 C141.0 42.0 144.3 48.3 146 52 C147.7 55.7 149.3 60.3 150 62"/><path d="M88 52 C89.3 53.7 95.0 58.7 96 62 C97.0 65.3 94.3 70.3 94 72"/></g>
<g filter="url(#bl2)" stroke="#c0e0ff" stroke-width="0.55" fill="none" stroke-opacity="0.65"><path d="M37 1.4 C38.2 2.3 41.0 4.2 44 7 C47.0 9.8 52.7 14.4 55 18 C57.3 21.6 57.5 26.8 58 28.5"/><path d="M62 32 C64.4 33.2 71.8 37.6 76.6 39.4 C81.4 41.2 86.8 41.2 91 43 C95.2 44.8 99.6 50.0 102 50 C104.4 50.0 104.3 46.0 105.5 43 C106.7 40.0 109.0 35.7 109 32 C109.0 28.3 106.1 22.8 105.5 21"/><path d="M22 28.5 C21.8 30.9 20.4 39.4 20.5 43 C20.6 46.6 22.0 48.8 22.3 50"/><path d="M40 50 C41.8 49.4 47.9 47.8 51 46.6 C54.1 45.4 57.2 43.6 58.5 43"/><path d="M80 14 C81.8 14.6 88.0 15.9 91 17.7 C94.0 19.5 95.6 23.2 98 25 C100.4 26.8 104.2 27.9 105.5 28.5"/><path d="M102 7 C103.8 6.3 109.1 2.4 112.7 3 C116.3 3.6 121.2 8.1 123.6 10.5 C126.0 12.9 126.4 16.5 127 17.7"/><path d="M102 50 C103.2 51.2 107.2 54.5 109 57.5 C110.8 60.5 109.7 65.0 112.7 68 C115.7 71.0 124.6 74.3 127 75.6"/><path d="M123.6 25 C124.2 27.4 125.8 34.6 127 39.4 C128.2 44.2 130.2 51.5 130.8 53.9"/><path d="M156 25 C157.8 23.8 163.4 20.7 167 17.7 C170.6 14.7 177.2 9.2 177.8 6.8 C178.4 4.4 171.8 3.8 170.6 3.2"/><path d="M156 28.5 C157.2 30.3 160.4 36.4 163.4 39.4 C166.4 42.4 171.0 46.0 174 46.6 C177.0 47.2 178.5 45.4 181.5 43 C184.5 40.6 190.2 33.8 192 32"/><path d="M163.4 1.4 C162.8 3.5 159.7 9.5 159.7 14 C159.7 18.5 162.8 26.1 163.4 28.5"/><path d="M185 7 C186.2 8.2 189.6 11.0 192 14 C194.4 17.0 195.8 22.0 199.5 25 C203.2 28.0 208.6 32.7 214 32 C219.4 31.3 229.0 22.8 232 21"/><path d="M170.6 64.7 C173.0 64.1 180.2 59.8 185 61 C189.8 62.2 194.7 69.6 199.5 72 C204.3 74.4 211.6 75.0 214 75.6"/><path d="M214 39.4 C216.4 41.2 223.1 47.6 228.5 50 C233.9 52.4 243.5 53.3 246.5 54"/><path d="M192 46.6 C193.2 47.8 197.0 52.2 199.5 54 C202.0 55.8 205.6 56.9 206.8 57.5"/><path d="M76.6 68 C77.8 69.3 81.6 73.8 84 75.6 C86.4 77.4 89.8 78.4 91 79"/><path d="M55 68 C55.6 69.3 57.9 74.3 58.5 75.6"/><path d="M33 72 C33.7 72.8 36.3 76.2 37 77"/><path d="M120 62 C121.2 63.0 124.7 65.3 127 68 C129.3 70.7 132.8 76.3 134 78"/><path d="M221 10.5 C222.8 11.7 228.3 15.3 232 17.7 C235.7 20.1 240.0 22.6 243 25 C246.0 27.4 248.8 30.8 250 32"/><path d="M203 32 C203.6 33.8 204.4 40.6 206.8 43 C209.2 45.4 215.8 46.0 217.6 46.6"/><path d="M140 40 C141.0 42.0 144.3 48.3 146 52 C147.7 55.7 149.3 60.3 150 62"/><path d="M88 52 C89.3 53.7 95.0 58.7 96 62 C97.0 65.3 94.3 70.3 94 72"/></g>
<circle cx="98" cy="25" r="6" fill="url(#glw)"/><circle cx="172" cy="45" r="7" fill="url(#glw)"/><circle cx="44" cy="7" r="5" fill="url(#glw)"/><circle cx="105" cy="50" r="5" fill="url(#glw)"/><circle cx="185" cy="61" r="5" fill="url(#glw)"/><circle cx="165" cy="20" r="6" fill="url(#glw)"/>
<rect width="279" height="80" fill="url(#vfade)"/>
</g></svg>
<div class="a" style="left:250.8px;top:90.1px;width:3px;height:3px;border-radius:0.6px;background:#0a0a0a;box-shadow:0 0 0 0.5px rgba(255,255,255,0.7)"></div>
<div class="a" style="left:394.5px;top:90.1px;width:3px;height:3px;border-radius:0.6px;background:#0a0a0a;box-shadow:0 0 0 0.5px rgba(255,255,255,0.7)"></div>
<div class="a" style="left:538.3px;top:90.1px;width:3px;height:3px;border-radius:0.6px;background:#0a0a0a;box-shadow:0 0 0 0.5px rgba(255,255,255,0.7)"></div>
<div class="a" style="left:250.8px;top:170.1px;width:3px;height:3px;border-radius:0.6px;background:#0a0a0a;box-shadow:0 0 0 0.5px rgba(255,255,255,0.7)"></div>
<div class="a" style="left:538.3px;top:170.1px;width:3px;height:3px;border-radius:0.6px;background:#0a0a0a;box-shadow:0 0 0 0.5px rgba(255,255,255,0.7)"></div>
<div class="a" style="left:250.8px;top:250.1px;width:3px;height:3px;border-radius:0.6px;background:#0a0a0a;box-shadow:0 0 0 0.5px rgba(255,255,255,0.7)"></div>
<div class="a" style="left:394.5px;top:250.1px;width:3px;height:3px;border-radius:0.6px;background:#0a0a0a;box-shadow:0 0 0 0.5px rgba(255,255,255,0.7)"></div>
<div class="a" style="left:538.3px;top:250.1px;width:3px;height:3px;border-radius:0.6px;background:#0a0a0a;box-shadow:0 0 0 0.5px rgba(255,255,255,0.7)"></div>
<div class="a" id="tlband"></div>
<div class="a" style="left:129.5px;top:266.5px;width:263.5px;height:10.5px;background:linear-gradient(#e4e4e4,#d0d0d0 60%,#c0c0c0);border-radius:1px"></div>
<svg style="left:131.0px;top:268.5px" width="2" height="7" viewBox="0 0 2 7"><g fill="#777"><rect x="0.3" y="0" width="1" height="0.8"/><rect x="0.3" y="2" width="1" height="0.8"/><rect x="0.3" y="4" width="1" height="0.8"/><rect x="0.3" y="6" width="1" height="0.8"/></g></svg>
<svg style="left:389px;top:273px" width="3" height="3" viewBox="0 0 3 3"><path d="M0.2 1 H2.8 L1.5 2.6Z" fill="#333"/></svg>
<div class="a" style="left:395px;top:266.5px;width:48px;height:10.5px;background:linear-gradient(#e4e4e4,#d0d0d0 60%,#c0c0c0);border-radius:1px"></div>
<svg style="left:396.5px;top:268.5px" width="2" height="7" viewBox="0 0 2 7"><g fill="#777"><rect x="0.3" y="0" width="1" height="0.8"/><rect x="0.3" y="2" width="1" height="0.8"/><rect x="0.3" y="4" width="1" height="0.8"/><rect x="0.3" y="6" width="1" height="0.8"/></g></svg>
<svg style="left:439px;top:273px" width="3" height="3" viewBox="0 0 3 3"><path d="M0.2 1 H2.8 L1.5 2.6Z" fill="#333"/></svg>
<svg style="left:133px;top:268px" width="310" height="8" viewBox="0 0 310 8">
<g stroke="#333" stroke-width="0.6" fill="none"><circle cx="4" cy="3.5" r="2.4"/><circle cx="14" cy="3.5" r="2.4"/><circle cx="24" cy="3.5" r="2.4"/><circle cx="33" cy="3.5" r="2.6"/></g>
<path d="M5.8 5.3 L7.5 7 M15.8 5.3 L17.5 7 M25.8 5.3 L27.5 7" stroke="#333" stroke-width="0.8"/>
<path d="M2.8 3.5 H5.2 M4 2.3 V4.7" stroke="#e8203a" stroke-width="0.7"/><path d="M12.8 3.5 H15.2" stroke="#e8203a" stroke-width="0.7"/><path d="M31.8 3.5 H34.2" stroke="#333" stroke-width="0.7"/>
<rect x="103" y="-1" width="9" height="9" fill="#f8d860" stroke="#d0a830" stroke-width="0.4"/><circle cx="107.5" cy="3.5" r="2.8" fill="#fff" stroke="#888" stroke-width="0.4"/>
<path d="M116 1 L120 3.5 L116 6Z" fill="#1a4fd0"/>
<path d="M151.5 1 V6 M157 1 L153 3.5 L157 6Z M155 1 L151 3.5" fill="#222" stroke="#222" stroke-width="0.4"/>
<path d="M160 3.5 L163 1 V6Z M163 3.5 L166 1 V6Z" fill="#222"/>
<path d="M170 3.5 L173 1 V6Z" fill="#222"/>
<path d="M179 1 L182 3.5 L179 6Z" fill="#222"/>
<path d="M188 1 L191 3.5 L188 6Z M191 1 L194 3.5 L191 6Z" fill="#222"/>
<path d="M197 1 L200 3.5 L197 6Z M200 1 L203 3.5 L200 6Z M203.4 1 V6" fill="#222" stroke="#222" stroke-width="0.4"/>
<rect x="206.5" y="1" width="0.5" height="6" fill="#aaa"/>
<path d="M211 0.8 H209.5 V6.4 H211 M213.5 0.8 H215 V6.4 H213.5" stroke="#2a7ad0" stroke-width="0.8" fill="none"/>
<path d="M221 0.8 H219.5 V6.4 H221 M223.5 0.8 H225 V6.4 H223.5" stroke="#e8203a" stroke-width="0.8" fill="none"/><rect x="221.8" y="2" width="1" height="1" fill="#2a7ad0"/><rect x="221.8" y="4.2" width="1" height="1" fill="#2a7ad0"/>
<path d="M230 0.8 H228.5 V6.4 H230 M232.5 0.8 H234 V6.4 H232.5" stroke="#e8203a" stroke-width="0.8" fill="none"/><rect x="230.8" y="2" width="1" height="1" fill="#555"/><rect x="230.8" y="4.2" width="1" height="1" fill="#555"/>
<rect x="237" y="1" width="0.5" height="6" fill="#aaa"/>
<path d="M239 6 L241 2 L243 5 L244 3" stroke="#2a7ad0" stroke-width="0.9" fill="none"/><circle cx="244.5" cy="5.5" r="1" fill="#e8203a"/>
<path d="M248 6 L250 2.5 L252 5 L254 2" stroke="#2a7ad0" stroke-width="0.9" fill="none"/>
<path d="M270 1 V6.5 M272.5 1 V6.5" stroke="#e8203a" stroke-width="0.7"/><rect x="270.5" y="2" width="3" height="1" fill="#a060c0"/><rect x="270.5" y="4.5" width="3" height="1" fill="#a060c0"/>
<path d="M279 1 V6.5 M283 1 V6.5" stroke="#e8203a" stroke-width="0.7"/><rect x="279.5" y="2" width="3.5" height="1" fill="#a060c0"/><rect x="279.5" y="4.5" width="3.5" height="1" fill="#a060c0"/>
<path d="M289 6 L294 2" stroke="#c090d0" stroke-width="0.9"/>
<rect x="298.5" y="3" width="4.5" height="1.2" fill="#e8203a"/>
</svg>
<div class="t" style="left:256px;top:269.8px;font-size:5px;color:#222">Preview ▾</div>
<div class="a" id="tltabs"></div>
<svg style="left:129px;top:277px" width="60" height="12" viewBox="0 0 60 12"><path d="M2 12 L8 1 H28 L30 12" fill="#fafafa" stroke="#bbb" stroke-width="0.5"/><path d="M28 12 L34 1 H42 L44 12" fill="#fafafa" stroke="#bbb" stroke-width="0.5"/></svg>
<div class="t" style="left:139.5px;top:280.5px;font-size:5px;color:#222">Scene 0</div>
<div class="t" style="left:162px;top:280.5px;font-size:5px;color:#111;font-weight:bold">Te</div>
<div class="a" style="left:129px;top:287.5px;width:540px;height:1px;background:#888"></div>
<div class="a" style="left:129px;top:288.5px;width:106px;height:13.5px;background:#a6a6a6"></div>
<div class="a" style="left:235px;top:287.5px;width:434px;height:3.8px;background:#cdcdcd"></div>
<div class="a" style="left:235px;top:291.2px;width:434px;height:0.7px;background:#5a5a5a"></div>
<div class="a" style="left:235px;top:291.9px;width:434px;height:9.3px;background:#a9a9a9"></div>
<div class="a" style="left:235px;top:300.3px;width:434px;height:0.7px;background:#bdbdbd"></div>
<div class="a" style="left:235px;top:301.2px;width:434px;height:6.5px;background:#7d7d7d"></div>
<div class="a" style="left:235px;top:307.5px;width:434px;height:1.5px;background:#383838"></div>
<div class="t" style="left:235.5px;top:294.4px;font-size:4.6px;color:#22222e">.000</div>
<div class="t" style="left:252.2px;top:294.4px;width:21px;text-align:center;font-size:4.6px;color:#22222e">00:00.800</div>
<div class="t" style="left:279.9px;top:294.4px;width:21px;text-align:center;font-size:4.6px;color:#22222e">00:01.601</div>
<div class="t" style="left:307.6px;top:294.4px;width:21px;text-align:center;font-size:4.6px;color:#22222e">00:02.402</div>
<div class="t" style="left:335.3px;top:294.4px;width:21px;text-align:center;font-size:4.6px;color:#22222e">00:03.203</div>
<div class="t" style="left:363.0px;top:294.4px;width:21px;text-align:center;font-size:4.6px;color:#22222e">00:04.004</div>
<div class="t" style="left:390.7px;top:294.4px;width:21px;text-align:center;font-size:4.6px;color:#22222e">00:04.804</div>
<div class="t" style="left:418.4px;top:294.4px;width:21px;text-align:center;font-size:4.6px;color:#22222e">00:05.605</div>
<div class="t" style="left:446.1px;top:294.4px;width:21px;text-align:center;font-size:4.6px;color:#22222e">00:06.406</div>
<div class="t" style="left:473.8px;top:294.4px;width:21px;text-align:center;font-size:4.6px;color:#22222e">00:07.207</div>
<div class="t" style="left:501.5px;top:294.4px;width:21px;text-align:center;font-size:4.6px;color:#22222e">00:08.008</div>
<div class="t" style="left:529.2px;top:294.4px;width:21px;text-align:center;font-size:4.6px;color:#22222e">00:08.808</div>
<div class="t" style="left:556.9px;top:294.4px;width:21px;text-align:center;font-size:4.6px;color:#22222e">00:09.609</div>
<div class="t" style="left:584.6px;top:294.4px;width:21px;text-align:center;font-size:4.6px;color:#22222e">00:10.410</div>
<div class="t" style="left:612.3px;top:294.4px;width:21px;text-align:center;font-size:4.6px;color:#22222e">00:11.211</div>
<div class="t" style="left:640.0px;top:294.4px;width:21px;text-align:center;font-size:4.6px;color:#22222e">00:12.012</div>
<svg style="left:235px;top:299.2px" width="434" height="3" viewBox="0 0 434 3"><rect x="0.00" y="0" width="0.6" height="2.6" fill="#3a3a3a"/><rect x="3.46" y="1.2" width="0.6" height="0.9" fill="#555"/><rect x="6.93" y="1.2" width="0.6" height="0.9" fill="#555"/><rect x="10.39" y="1.2" width="0.6" height="0.9" fill="#555"/><rect x="13.85" y="0" width="0.6" height="2.6" fill="#3a3a3a"/><rect x="17.31" y="1.2" width="0.6" height="0.9" fill="#555"/><rect x="20.78" y="1.2" width="0.6" height="0.9" fill="#555"/><rect x="24.24" y="1.2" width="0.6" height="0.9" fill="#555"/><rect x="27.70" y="0" width="0.6" height="2.6" fill="#3a3a3a"/><rect x="31.16" y="1.2" width="0.6" height="0.9" fill="#555"/><rect x="34.62" y="1.2" width="0.6" height="0.9" fill="#555"/><rect x="38.09" y="1.2" width="0.6" height="0.9" fill="#555"/><rect x="41.55" y="0" width="0.6" height="2.6" fill="#3a3a3a"/><rect x="45.01" y="1.2" width="0.6" height="0.9" fill="#555"/><rect x="48.48" y="1.2" width="0.6" height="0.9" fill="#555"/><rect x="51.94" y="1.2" width="0.6" height="0.9" fill="#555"/><rect x="55.40" y="0" width="0.6" height="2.6" fill="#3a3a3a"/><rect x="58.86" y="1.2" width="0.6" height="0.9" fill="#555"/><rect x="62.32" y="1.2" width="0.6" height="0.9" fill="#555"/><rect x="65.79" y="1.2" width="0.6" height="0.9" fill="#555"/><rect x="69.25" y="0" width="0.6" height="2.6" fill="#3a3a3a"/><rect x="72.71" y="1.2" width="0.6" height="0.9" fill="#555"/><rect x="76.18" y="1.2" width="0.6" height="0.9" fill="#555"/><rect x="79.64" y="1.2" width="0.6" height="0.9" fill="#555"/><rect x="83.10" y="0" width="0.6" height="2.6" fill="#3a3a3a"/><rect x="86.56" y="1.2" width="0.6" height="0.9" fill="#555"/><rect x="90.02" y="1.2" width="0.6" height="0.9" fill="#555"/><rect x="93.49" y="1.2" width="0.6" height="0.9" fill="#555"/><rect x="96.95" y="0" width="0.6" height="2.6" fill="#3a3a3a"/><rect x="100.41" y="1.2" width="0.6" height="0.9" fill="#555"/><rect x="103.88" y="1.2" width="0.6" height="0.9" fill="#555"/><rect x="107.34" y="1.2" width="0.6" height="0.9" fill="#555"/><rect x="110.80" y="0" width="0.6" height="2.6" fill="#3a3a3a"/><rect x="114.26" y="1.2" width="0.6" height="0.9" fill="#555"/><rect x="117.73" y="1.2" width="0.6" height="0.9" fill="#555"/><rect x="121.19" y="1.2" width="0.6" height="0.9" fill="#555"/><rect x="124.65" y="0" width="0.6" height="2.6" fill="#3a3a3a"/><rect x="128.11" y="1.2" width="0.6" height="0.9" fill="#555"/><rect x="131.57" y="1.2" width="0.6" height="0.9" fill="#555"/><rect x="135.04" y="1.2" width="0.6" height="0.9" fill="#555"/><rect x="138.50" y="0" width="0.6" height="2.6" fill="#3a3a3a"/><rect x="141.96" y="1.2" width="0.6" height="0.9" fill="#555"/><rect x="145.42" y="1.2" width="0.6" height="0.9" fill="#555"/><rect x="148.89" y="1.2" width="0.6" height="0.9" fill="#555"/><rect x="152.35" y="0" width="0.6" height="2.6" fill="#3a3a3a"/><rect x="155.81" y="1.2" width="0.6" height="0.9" fill="#555"/><rect x="159.27" y="1.2" width="0.6" height="0.9" fill="#555"/><rect x="162.74" y="1.2" width="0.6" height="0.9" fill="#555"/><rect x="166.20" y="0" width="0.6" height="2.6" fill="#3a3a3a"/><rect x="169.66" y="1.2" width="0.6" height="0.9" fill="#555"/><rect x="173.12" y="1.2" width="0.6" height="0.9" fill="#555"/><rect x="176.59" y="1.2" width="0.6" height="0.9" fill="#555"/><rect x="180.05" y="0" width="0.6" height="2.6" fill="#3a3a3a"/><rect x="183.51" y="1.2" width="0.6" height="0.9" fill="#555"/><rect x="186.98" y="1.2" width="0.6" height="0.9" fill="#555"/><rect x="190.44" y="1.2" width="0.6" height="0.9" fill="#555"/><rect x="193.90" y="0" width="0.6" height="2.6" fill="#3a3a3a"/><rect x="197.36" y="1.2" width="0.6" height="0.9" fill="#555"/><rect x="200.82" y="1.2" width="0.6" height="0.9" fill="#555"/><rect x="204.29" y="1.2" width="0.6" height="0.9" fill="#555"/><rect x="207.75" y="0" width="0.6" height="2.6" fill="#3a3a3a"/><rect x="211.21" y="1.2" width="0.6" height="0.9" fill="#555"/><rect x="214.67" y="1.2" width="0.6" height="0.9" fill="#555"/><rect x="218.14" y="1.2" width="0.6" height="0.9" fill="#555"/><rect x="221.60" y="0" width="0.6" height="2.6" fill="#3a3a3a"/><rect x="225.06" y="1.2" width="0.6" height="0.9" fill="#555"/><rect x="228.52" y="1.2" width="0.6" height="0.9" fill="#555"/><rect x="231.99" y="1.2" width="0.6" height="0.9" fill="#555"/><rect x="235.45" y="0" width="0.6" height="2.6" fill="#3a3a3a"/><rect x="238.91" y="1.2" width="0.6" height="0.9" fill="#555"/><rect x="242.38" y="1.2" width="0.6" height="0.9" fill="#555"/><rect x="245.84" y="1.2" width="0.6" height="0.9" fill="#555"/><rect x="249.30" y="0" width="0.6" height="2.6" fill="#3a3a3a"/><rect x="252.76" y="1.2" width="0.6" height="0.9" fill="#555"/><rect x="256.22" y="1.2" width="0.6" height="0.9" fill="#555"/><rect x="259.69" y="1.2" width="0.6" height="0.9" fill="#555"/><rect x="263.15" y="0" width="0.6" height="2.6" fill="#3a3a3a"/><rect x="266.61" y="1.2" width="0.6" height="0.9" fill="#555"/><rect x="270.07" y="1.2" width="0.6" height="0.9" fill="#555"/><rect x="273.54" y="1.2" width="0.6" height="0.9" fill="#555"/><rect x="277.00" y="0" width="0.6" height="2.6" fill="#3a3a3a"/><rect x="280.46" y="1.2" width="0.6" height="0.9" fill="#555"/><rect x="283.92" y="1.2" width="0.6" height="0.9" fill="#555"/><rect x="287.39" y="1.2" width="0.6" height="0.9" fill="#555"/><rect x="290.85" y="0" width="0.6" height="2.6" fill="#3a3a3a"/><rect x="294.31" y="1.2" width="0.6" height="0.9" fill="#555"/><rect x="297.77" y="1.2" width="0.6" height="0.9" fill="#555"/><rect x="301.24" y="1.2" width="0.6" height="0.9" fill="#555"/><rect x="304.70" y="0" width="0.6" height="2.6" fill="#3a3a3a"/><rect x="308.16" y="1.2" width="0.6" height="0.9" fill="#555"/><rect x="311.62" y="1.2" width="0.6" height="0.9" fill="#555"/><rect x="315.09" y="1.2" width="0.6" height="0.9" fill="#555"/><rect x="318.55" y="0" width="0.6" height="2.6" fill="#3a3a3a"/><rect x="322.01" y="1.2" width="0.6" height="0.9" fill="#555"/><rect x="325.47" y="1.2" width="0.6" height="0.9" fill="#555"/><rect x="328.94" y="1.2" width="0.6" height="0.9" fill="#555"/><rect x="332.40" y="0" width="0.6" height="2.6" fill="#3a3a3a"/><rect x="335.86" y="1.2" width="0.6" height="0.9" fill="#555"/><rect x="339.33" y="1.2" width="0.6" height="0.9" fill="#555"/><rect x="342.79" y="1.2" width="0.6" height="0.9" fill="#555"/><rect x="346.25" y="0" width="0.6" height="2.6" fill="#3a3a3a"/><rect x="349.71" y="1.2" width="0.6" height="0.9" fill="#555"/><rect x="353.17" y="1.2" width="0.6" height="0.9" fill="#555"/><rect x="356.64" y="1.2" width="0.6" height="0.9" fill="#555"/><rect x="360.10" y="0" width="0.6" height="2.6" fill="#3a3a3a"/><rect x="363.56" y="1.2" width="0.6" height="0.9" fill="#555"/><rect x="367.02" y="1.2" width="0.6" height="0.9" fill="#555"/><rect x="370.49" y="1.2" width="0.6" height="0.9" fill="#555"/><rect x="373.95" y="0" width="0.6" height="2.6" fill="#3a3a3a"/><rect x="377.41" y="1.2" width="0.6" height="0.9" fill="#555"/><rect x="380.88" y="1.2" width="0.6" height="0.9" fill="#555"/><rect x="384.34" y="1.2" width="0.6" height="0.9" fill="#555"/><rect x="387.80" y="0" width="0.6" height="2.6" fill="#3a3a3a"/><rect x="391.26" y="1.2" width="0.6" height="0.9" fill="#555"/><rect x="394.72" y="1.2" width="0.6" height="0.9" fill="#555"/><rect x="398.19" y="1.2" width="0.6" height="0.9" fill="#555"/><rect x="401.65" y="0" width="0.6" height="2.6" fill="#3a3a3a"/><rect x="405.11" y="1.2" width="0.6" height="0.9" fill="#555"/><rect x="408.58" y="1.2" width="0.6" height="0.9" fill="#555"/><rect x="412.04" y="1.2" width="0.6" height="0.9" fill="#555"/><rect x="415.50" y="0" width="0.6" height="2.6" fill="#3a3a3a"/><rect x="418.96" y="1.2" width="0.6" height="0.9" fill="#555"/><rect x="422.42" y="1.2" width="0.6" height="0.9" fill="#555"/><rect x="425.89" y="1.2" width="0.6" height="0.9" fill="#555"/><rect x="429.35" y="0" width="0.6" height="2.6" fill="#3a3a3a"/></svg>
<div class="a" style="left:235.5px;top:300px;width:2.5px;height:8px;background:#4a8ad8"></div>
<div class="a" style="left:409px;top:302.2px;width:32.5px;height:5.6px;background:#f4f4f4;border:0.4px solid #777"></div>
<div class="t" style="left:411px;top:302.7px;font-size:4.75px;color:#111">00:00:05.005</div>
<svg style="left:406.5px;top:302px" width="4" height="6" viewBox="0 0 4 6"><path d="M2 0.5 L3.8 5.5 H0.2Z" fill="#fff" stroke="#555" stroke-width="0.3"/></svg>
<div class="a" style="left:129px;top:300.5px;width:106.5px;height:8px;background:#b0b0b0"></div><div class="a" style="left:129px;top:308.4px;width:106.5px;height:0.8px;background:#6a6a6a"></div>
<div class="a" style="left:129px;top:309px;width:541px;height:54px;background:#a6a6a6"></div>
<div class="a" style="left:129px;top:309px;width:106.5px;height:15px;background:#8e8e8e"></div>
<div class="a" style="left:235px;top:309px;width:434px;height:15px;background:#9a9a9a"></div>
<svg style="left:129.5px;top:309px" width="539" height="54" viewBox="0 0 539 54"><rect x="0" y="15.0" width="539" height="0.6" fill="#bcbcbc"/><rect x="0" y="23.3" width="539" height="0.6" fill="#bcbcbc"/><rect x="0" y="31.4" width="539" height="0.6" fill="#bcbcbc"/><rect x="0" y="39.6" width="539" height="0.6" fill="#bcbcbc"/><rect x="0" y="47.0" width="539" height="0.6" fill="#bcbcbc"/><rect x="9.4" y="0" width="0.6" height="54" fill="#bcbcbc"/><rect x="17.2" y="0" width="0.6" height="54" fill="#bcbcbc"/><rect x="42.5" y="0" width="0.6" height="54" fill="#bcbcbc"/><rect x="52.0" y="0" width="0.6" height="54" fill="#bcbcbc"/><rect x="59.8" y="0" width="0.6" height="54" fill="#bcbcbc"/><rect x="103.0" y="0" width="0.6" height="54" fill="#bcbcbc"/></svg>
<svg style="left:131px;top:301.3px" width="40" height="7" viewBox="0 0 40 7"><ellipse cx="3" cy="3.5" rx="2.4" ry="1.5" fill="none" stroke="#ddd" stroke-width="0.5"/><rect x="9.5" y="2.5" width="3.5" height="3.5" fill="#bbb"/><path d="M10.2 2.5 V1.6 A1 1 0 0 1 12.3 1.6 V2.5" stroke="#bbb" stroke-width="0.5" fill="none"/><rect x="18" y="1" width="4" height="4" fill="#ddd" stroke="#888" stroke-width="0.3"/><circle cx="21.5" cy="4.5" r="2" fill="#eee" stroke="#888" stroke-width="0.3"/></svg>
<div class="t" style="left:156px;top:302.6px;font-size:4.8px;color:#111">Com...</div>
<svg style="left:131px;top:313.5px" width="8" height="5" viewBox="0 0 8 5"><ellipse cx="3.5" cy="2.5" rx="2.6" ry="1.5" fill="none" stroke="#444" stroke-width="0.5"/><circle cx="3.5" cy="2.5" r="0.8" fill="#444"/></svg>
<div class="t" style="left:148px;top:313.7px;font-size:5px;color:#1a1a1a">Blend</div>
<svg style="left:172px;top:312.5px" width="30" height="7" viewBox="0 0 30 7"><path d="M2 1 L3 3 L1.5 3.5 L3.5 6" stroke="#333" stroke-width="0.5" fill="none"/><rect x="8" y="2" width="3" height="3" fill="#eee" stroke="#555" stroke-width="0.3"/><rect x="17" y="1" width="5" height="5" fill="#2aa8a0" stroke="#555" stroke-width="0.3"/></svg>
<div class="t" style="left:197.5px;top:313.7px;font-size:5px;color:#111">Video</div>
<div class="a" style="left:236px;top:310px;width:389.5px;height:14px;background:linear-gradient(#b6cdf0,#8fb0e6 30%,#5a86d6 75%,#3e6cc8);border-left:0.8px solid #2a5ab8"></div>
<div class="a" style="left:237.2px;top:311.2px;width:17px;height:11.4px;background:radial-gradient(ellipse at 50% 45%,#2a5074,#122236 60%,#0a121c)"></div>
<div class="t" style="left:256.5px;top:314.8px;font-size:5px;color:#1a1a2a">video_1</div>
<div class="a" style="left:303px;top:288.5px;width:0.8px;height:75px;background:#d83030"></div>
<div class="a" style="left:300.5px;top:293.5px;width:5.8px;height:6.6px;background:linear-gradient(#b8d4f4,#6aa0e0);border:0.5px solid #4a7ac0;border-radius:1px 1px 2px 2px"></div>
<div class="a" style="left:666.8px;top:291px;width:2.2px;height:18px;background:#5a5a5a"></div>
<div class="a" style="left:666.5px;top:287.8px;width:2px;height:3.5px;background:#4a8ad8"></div>
<div class="a" id="hscroll2"></div>
<svg style="left:129px;top:363px" width="540" height="9" viewBox="0 0 540 9"><path d="M6 2.8 L4 4.5 L6 6.2Z" fill="#555"/><path d="M529 2.8 L531 4.5 L529 6.2Z" fill="#555"/></svg>
<div class="a" id="prhead"></div>
<div class="t" style="left:674.3px;top:77.8px;font-size:6.3px;color:#dedede">Properties window</div>
<svg style="left:742px;top:77.5px" width="14" height="7" viewBox="0 0 14 7"><rect x="1.6" y="0.6" width="2.4" height="3" fill="none" stroke="#ddd" stroke-width="0.8"/><path d="M1 3.8 H4.6 M2.8 3.8 V6" stroke="#ddd" stroke-width="0.8"/><path d="M8 1 L12 5 M12 1 L8 5" stroke="#e8e8e8" stroke-width="0.9"/></svg>
<div class="a" style="left:670px;top:86px;width:1.5px;height:287px;background:#4a4a4a"></div>
<div class="a" id="prtool"></div>
<svg style="left:672.5px;top:86.8px" width="20" height="10" viewBox="0 0 20 10"><rect x="0" y="0" width="9" height="9.4" fill="#d4ecf8"/><g fill="#666"><rect x="1.5" y="2" width="2" height="1"/><rect x="4.5" y="2" width="3" height="1"/><rect x="1.5" y="4.5" width="2" height="1"/><rect x="4.5" y="4.5" width="3" height="1"/><rect x="1.5" y="7" width="2" height="1"/><rect x="4.5" y="7" width="3" height="1"/></g><path d="M12 1.5 H14 V8 H12Z" fill="#555"/><rect x="14.5" y="3" width="1.6" height="5.5" fill="#1a3ad0"/><rect x="12.2" y="4" width="1.6" height="1" fill="#ddd"/></svg>
<div class="a" style="left:671.5px;top:96.8px;width:85.5px;height:0.6px;background:#9a9a9a"></div>
<div class="a" id="prgrid"></div>
<div class="a" style="left:671.5px;top:97.5px;width:78.0px;height:239.91px;background:#e3e6e9"></div>
<div class="a" style="left:749.5px;top:97.5px;width:6.5px;height:232.6px;background:#f0f0f0"></div>
<div class="a" style="left:750.2px;top:106px;width:5px;height:181px;background:linear-gradient(90deg,#e6e6e6,#d4d4d4);border:0.5px solid #b8b8b8"></div>
<svg style="left:750px;top:99px" width="6" height="5" viewBox="0 0 6 5"><path d="M1.5 3 L3 1.5 L4.5 3Z" fill="#444"/></svg>
<svg style="left:673px;top:99.40px" width="4" height="4" viewBox="0 0 4 4"><circle cx="2" cy="2" r="1.5" fill="none" stroke="#c4c4c4" stroke-width="0.5"/></svg>
<div class="t" style="left:678.5px;top:99.10px;font-size:5px;font-weight:bold;color:#1a1a1a">Common settings</div>
<div class="a" style="left:678.3px;top:104.77px;width:71.20000000000005px;height:7.27px;background:#fff;border-bottom:0.5px solid #e2e2e2"></div>
<div class="a" style="left:714.8px;top:104.77px;width:0.5px;height:7.27px;background:#e2e2e2"></div>
<div class="t" style="left:679.1px;top:105.77px;width:40.8px;overflow:hidden;font-size:5.1px;transform:scaleX(0.87);transform-origin:0 0;color:#b4b4b4">Type</div>
<div class="t" style="left:716.0px;top:105.77px;width:38.2px;overflow:hidden;font-size:5.1px;transform:scaleX(0.87);transform-origin:0 0;color:#b4b4b4">Video</div>
<div class="a" style="left:678.3px;top:112.04px;width:71.20000000000005px;height:7.27px;background:#fff;border-bottom:0.5px solid #e2e2e2"></div>
<div class="a" style="left:714.8px;top:112.04px;width:0.5px;height:7.27px;background:#e2e2e2"></div>
<div class="t" style="left:679.1px;top:113.04px;width:40.8px;overflow:hidden;font-size:5.1px;transform:scaleX(0.87);transform-origin:0 0;color:#1e1e1e">Object name</div>
<div class="t" style="left:716.0px;top:113.04px;width:38.2px;overflow:hidden;font-size:5.1px;transform:scaleX(0.87);transform-origin:0 0;color:#1e1e1e">video_1</div>
<div class="a" style="left:678.3px;top:119.31px;width:71.20000000000005px;height:7.27px;background:#fff;border-bottom:0.5px solid #e2e2e2"></div>
<div class="a" style="left:714.8px;top:119.31px;width:0.5px;height:7.27px;background:#e2e2e2"></div>
<div class="t" style="left:679.1px;top:120.31px;width:40.8px;overflow:hidden;font-size:5.1px;transform:scaleX(0.87);transform-origin:0 0;color:#1e1e1e">Composition mode</div>
<div class="t" style="left:716.0px;top:120.31px;width:38.2px;overflow:hidden;font-size:5.1px;transform:scaleX(0.87);transform-origin:0 0;color:#1e1e1e">Blend</div>
<svg style="left:673px;top:121.11px" width="4" height="4" viewBox="0 0 4 4"><path d="M1 0.6 L3 2 L1 3.4Z" fill="none" stroke="#c4c4c4" stroke-width="0.4"/></svg>
<svg style="left:679px;top:128.48px" width="4" height="4" viewBox="0 0 4 4"><circle cx="2" cy="2" r="1.5" fill="none" stroke="#c4c4c4" stroke-width="0.5"/></svg>
<div class="t" style="left:684.5px;top:128.18px;font-size:5px;font-weight:bold;color:#1a1a1a">Coordinates</div>
<div class="a" style="left:684.3px;top:133.85px;width:65.20000000000005px;height:7.27px;background:#fff;border-bottom:0.5px solid #e2e2e2"></div>
<div class="a" style="left:714.8px;top:133.85px;width:0.5px;height:7.27px;background:#e2e2e2"></div>
<div class="t" style="left:685.1px;top:134.85px;width:33.9px;overflow:hidden;font-size:5.1px;transform:scaleX(0.87);transform-origin:0 0;color:#1e1e1e">Left</div>
<div class="t" style="left:716.0px;top:134.85px;width:38.2px;overflow:hidden;font-size:5.1px;transform:scaleX(0.87);transform-origin:0 0;color:#1e1e1e">-6.000</div>
<div class="a" style="left:684.3px;top:141.12px;width:65.20000000000005px;height:7.27px;background:#fff;border-bottom:0.5px solid #e2e2e2"></div>
<div class="a" style="left:714.8px;top:141.12px;width:0.5px;height:7.27px;background:#e2e2e2"></div>
<div class="t" style="left:685.1px;top:142.12px;width:33.9px;overflow:hidden;font-size:5.1px;transform:scaleX(0.87);transform-origin:0 0;color:#1e1e1e">Top</div>
<div class="t" style="left:716.0px;top:142.12px;width:38.2px;overflow:hidden;font-size:5.1px;transform:scaleX(0.87);transform-origin:0 0;color:#1e1e1e">3.000</div>
<div class="a" style="left:684.3px;top:148.39px;width:65.20000000000005px;height:7.27px;background:#fff;border-bottom:0.5px solid #e2e2e2"></div>
<div class="a" style="left:714.8px;top:148.39px;width:0.5px;height:7.27px;background:#e2e2e2"></div>
<div class="t" style="left:685.1px;top:149.39px;width:33.9px;overflow:hidden;font-size:5.1px;transform:scaleX(0.87);transform-origin:0 0;color:#1e1e1e">Width</div>
<div class="t" style="left:716.0px;top:149.39px;width:38.2px;overflow:hidden;font-size:5.1px;transform:scaleX(0.87);transform-origin:0 0;color:#1e1e1e">1932.000</div>
<div class="a" style="left:684.3px;top:155.66px;width:65.20000000000005px;height:7.27px;background:#fff;border-bottom:0.5px solid #e2e2e2"></div>
<div class="a" style="left:714.8px;top:155.66px;width:0.5px;height:7.27px;background:#e2e2e2"></div>
<div class="t" style="left:685.1px;top:156.66px;width:33.9px;overflow:hidden;font-size:5.1px;transform:scaleX(0.87);transform-origin:0 0;color:#1e1e1e">Height</div>
<div class="t" style="left:716.0px;top:156.66px;width:38.2px;overflow:hidden;font-size:5.1px;transform:scaleX(0.87);transform-origin:0 0;color:#1e1e1e">1074.000</div>
<div class="a" style="left:677.6px;top:163.33px;width:71px;height:6.77px;background:#dce9f8;border:0.6px solid #5b9be0"></div>
<div class="t" style="left:677.5px;top:164.93px;width:71.5px;text-align:center;font-size:4.9px;letter-spacing:-0.12px;color:#1a1a1a"><span style="display:inline-block;transform:scaleX(0.86)">Set the same size as the parent has</span></div>
<svg style="left:679px;top:172.10px" width="4" height="4" viewBox="0 0 4 4"><circle cx="2" cy="2" r="1.5" fill="none" stroke="#c4c4c4" stroke-width="0.5"/></svg>
<div class="t" style="left:684.5px;top:171.80px;font-size:5px;font-weight:bold;color:#1a1a1a">Object creation time</div>
<div class="a" style="left:684.3px;top:177.47px;width:65.20000000000005px;height:7.27px;background:#fff;border-bottom:0.5px solid #e2e2e2"></div>
<div class="a" style="left:714.8px;top:177.47px;width:0.5px;height:7.27px;background:#e2e2e2"></div>
<div class="t" style="left:685.1px;top:178.47px;width:33.9px;overflow:hidden;font-size:5.1px;transform:scaleX(0.87);transform-origin:0 0;color:#1e1e1e">Time (ms)</div>
<div class="t" style="left:716.0px;top:178.47px;width:38.2px;overflow:hidden;font-size:5.1px;transform:scaleX(0.87);transform-origin:0 0;color:#1e1e1e">00:00:00.000</div>
<div class="a" style="left:684.3px;top:184.74px;width:65.20000000000005px;height:7.27px;background:#fff;border-bottom:0.5px solid #e2e2e2"></div>
<div class="a" style="left:714.8px;top:184.74px;width:0.5px;height:7.27px;background:#e2e2e2"></div>
<div class="t" style="left:685.1px;top:185.74px;width:33.9px;overflow:hidden;font-size:5.1px;transform:scaleX(0.87);transform-origin:0 0;color:#1e1e1e">Time (frame)</div>
<div class="t" style="left:716.0px;top:185.74px;width:38.2px;overflow:hidden;font-size:5.1px;transform:scaleX(0.87);transform-origin:0 0;color:#1e1e1e">0</div>
<div class="a" style="left:684.3px;top:192.01px;width:65.20000000000005px;height:7.27px;background:#fff;border-bottom:0.5px solid #e2e2e2"></div>
<div class="a" style="left:714.8px;top:192.01px;width:0.5px;height:7.27px;background:#e2e2e2"></div>
<div class="t" style="left:685.1px;top:193.01px;width:33.9px;overflow:hidden;font-size:5.1px;transform:scaleX(0.87);transform-origin:0 0;color:#1e1e1e">Lock to parent</div>
<div class="t" style="left:716.0px;top:193.01px;width:38.2px;overflow:hidden;font-size:5.1px;transform:scaleX(0.87);transform-origin:0 0;color:#1e1e1e">No</div>
<svg style="left:679px;top:201.18px" width="4" height="4" viewBox="0 0 4 4"><circle cx="2" cy="2" r="1.5" fill="none" stroke="#c4c4c4" stroke-width="0.5"/></svg>
<div class="t" style="left:684.5px;top:200.88px;font-size:5px;font-weight:bold;color:#1a1a1a">Object drawing duration</div>
<div class="a" style="left:684.3px;top:206.55px;width:65.20000000000005px;height:7.27px;background:#fff;border-bottom:0.5px solid #e2e2e2"></div>
<div class="a" style="left:714.8px;top:206.55px;width:0.5px;height:7.27px;background:#e2e2e2"></div>
<div class="t" style="left:685.1px;top:207.55px;width:33.9px;overflow:hidden;font-size:5.1px;transform:scaleX(0.87);transform-origin:0 0;color:#1e1e1e">Duration (ms)</div>
<div class="t" style="left:716.0px;top:207.55px;width:38.2px;overflow:hidden;font-size:5.1px;transform:scaleX(0.87);transform-origin:0 0;color:#1e1e1e">00:00:11.277</div>
<div class="a" style="left:684.3px;top:213.82px;width:65.20000000000005px;height:7.27px;background:#fff;border-bottom:0.5px solid #e2e2e2"></div>
<div class="a" style="left:714.8px;top:213.82px;width:0.5px;height:7.27px;background:#e2e2e2"></div>
<div class="t" style="left:685.1px;top:214.82px;width:33.9px;overflow:hidden;font-size:5.1px;transform:scaleX(0.87);transform-origin:0 0;color:#1e1e1e">Duration (frames)</div>
<div class="t" style="left:716.0px;top:214.82px;width:38.2px;overflow:hidden;font-size:5.1px;transform:scaleX(0.87);transform-origin:0 0;color:#1e1e1e">338</div>
<div class="a" style="left:684.3px;top:221.09px;width:65.20000000000005px;height:7.27px;background:#fff;border-bottom:0.5px solid #e2e2e2"></div>
<div class="a" style="left:714.8px;top:221.09px;width:0.5px;height:7.27px;background:#e2e2e2"></div>
<div class="t" style="left:685.1px;top:222.09px;width:33.9px;overflow:hidden;font-size:5.1px;transform:scaleX(0.87);transform-origin:0 0;color:#1e1e1e">Lock to parent</div>
<div class="t" style="left:716.0px;top:222.09px;width:38.2px;overflow:hidden;font-size:5.1px;transform:scaleX(0.87);transform-origin:0 0;color:#1e1e1e">No</div>
<svg style="left:673px;top:230.26px" width="4" height="4" viewBox="0 0 4 4"><circle cx="2" cy="2" r="1.5" fill="none" stroke="#c4c4c4" stroke-width="0.5"/></svg>
<div class="t" style="left:678.5px;top:229.96px;font-size:5px;font-weight:bold;color:#1a1a1a">Video object settings</div>
<div class="a" style="left:678.3px;top:235.63px;width:71.20000000000005px;height:7.27px;background:#fff;border-bottom:0.5px solid #e2e2e2"></div>
<div class="a" style="left:714.8px;top:235.63px;width:0.5px;height:7.27px;background:#e2e2e2"></div>
<div class="t" style="left:679.1px;top:236.63px;width:40.8px;overflow:hidden;font-size:5.1px;transform:scaleX(0.87);transform-origin:0 0;color:#1e1e1e">Video</div>
<div class="t" style="left:716.0px;top:236.63px;width:38.2px;overflow:hidden;font-size:5.1px;transform:scaleX(0.87);transform-origin:0 0;color:#1e1e1e">video.mp4; ID=</div>
<div class="a" style="left:678.3px;top:242.90px;width:71.20000000000005px;height:7.27px;background:#fff;border-bottom:0.5px solid #e2e2e2"></div>
<div class="a" style="left:714.8px;top:242.90px;width:0.5px;height:7.27px;background:#e2e2e2"></div>
<div class="t" style="left:679.1px;top:243.90px;width:40.8px;overflow:hidden;font-size:5.1px;transform:scaleX(0.87);transform-origin:0 0;color:#b4b4b4">Resolution</div>
<div class="t" style="left:716.0px;top:243.90px;width:38.2px;overflow:hidden;font-size:5.1px;transform:scaleX(0.87);transform-origin:0 0;color:#b4b4b4">1280; 720</div>
<svg style="left:673px;top:244.70px" width="4" height="4" viewBox="0 0 4 4"><path d="M1 0.6 L3 2 L1 3.4Z" fill="none" stroke="#c4c4c4" stroke-width="0.4"/></svg>
<div class="a" style="left:677.6px;top:250.57px;width:71px;height:6.77px;background:#dce9f8;border:0.6px solid #5b9be0"></div>
<div class="t" style="left:677.5px;top:252.17px;width:71.5px;text-align:center;font-size:4.9px;letter-spacing:-0.12px;color:#1a1a1a"><span style="display:inline-block;transform:scaleX(0.86)">Set the original size</span></div>
<div class="a" style="left:678.3px;top:257.44px;width:71.20000000000005px;height:7.27px;background:#fff;border-bottom:0.5px solid #e2e2e2"></div>
<div class="a" style="left:714.8px;top:257.44px;width:0.5px;height:7.27px;background:#e2e2e2"></div>
<div class="t" style="left:679.1px;top:258.44px;width:40.8px;overflow:hidden;font-size:5.1px;transform:scaleX(0.87);transform-origin:0 0;color:#b4b4b4">Video duration</div>
<div class="t" style="left:716.0px;top:258.44px;width:38.2px;overflow:hidden;font-size:5.1px;transform:scaleX(0.87);transform-origin:0 0;color:#b4b4b4">00:00:11.245</div>
<div class="a" style="left:677.6px;top:265.11px;width:71px;height:6.77px;background:#dce9f8;border:0.6px solid #5b9be0"></div>
<div class="t" style="left:677.5px;top:266.71px;width:71.5px;text-align:center;font-size:4.9px;letter-spacing:-0.12px;color:#1a1a1a"><span style="display:inline-block;transform:scaleX(0.86)">Set the source duration</span></div>
<div class="a" style="left:677.6px;top:272.38px;width:71px;height:6.77px;background:#dce9f8;border:0.6px solid #5b9be0"></div>
<div class="t" style="left:677.5px;top:273.98px;width:71.5px;text-align:center;font-size:4.9px;letter-spacing:-0.12px;color:#1a1a1a"><span style="display:inline-block;transform:scaleX(0.86)">Cutting and splitting</span></div>
<div class="a" style="left:678.3px;top:279.25px;width:71.20000000000005px;height:7.27px;background:#fff;border-bottom:0.5px solid #e2e2e2"></div>
<div class="a" style="left:714.8px;top:279.25px;width:0.5px;height:7.27px;background:#e2e2e2"></div>
<div class="t" style="left:679.1px;top:280.25px;width:40.8px;overflow:hidden;font-size:5.1px;transform:scaleX(0.87);transform-origin:0 0;color:#1e1e1e">Cut borders</div>
<div class="t" style="left:716.0px;top:280.25px;width:38.2px;overflow:hidden;font-size:5.1px;transform:scaleX(0.87);transform-origin:0 0;color:#1e1e1e">0; 0; 0; 0</div>
<svg style="left:673px;top:281.05px" width="4" height="4" viewBox="0 0 4 4"><path d="M1 0.6 L3 2 L1 3.4Z" fill="none" stroke="#c4c4c4" stroke-width="0.4"/></svg>
<div class="a" style="left:677.6px;top:286.92px;width:71px;height:6.77px;background:#dce9f8;border:0.6px solid #5b9be0"></div>
<div class="t" style="left:677.5px;top:288.52px;width:71.5px;text-align:center;font-size:4.9px;letter-spacing:-0.12px;color:#1a1a1a"><span style="display:inline-block;transform:scaleX(0.86)">Crop borders...</span></div>
<div class="a" style="left:678.3px;top:293.79px;width:71.20000000000005px;height:7.27px;background:#fff;border-bottom:0.5px solid #e2e2e2"></div>
<div class="a" style="left:714.8px;top:293.79px;width:0.5px;height:7.27px;background:#e2e2e2"></div>
<div class="t" style="left:679.1px;top:294.79px;width:40.8px;overflow:hidden;font-size:5.1px;transform:scaleX(0.87);transform-origin:0 0;color:#1e1e1e">Playing backward</div>
<div class="t" style="left:716.0px;top:294.79px;width:38.2px;overflow:hidden;font-size:5.1px;transform:scaleX(0.87);transform-origin:0 0;color:#1e1e1e">No</div>
<div class="a" style="left:678.3px;top:301.06px;width:71.20000000000005px;height:7.27px;background:#fff;border-bottom:0.5px solid #e2e2e2"></div>
<div class="a" style="left:714.8px;top:301.06px;width:0.5px;height:7.27px;background:#e2e2e2"></div>
<div class="t" style="left:679.1px;top:302.06px;width:40.8px;overflow:hidden;font-size:5.1px;transform:scaleX(0.87);transform-origin:0 0;color:#1e1e1e">Speed (%)</div>
<div class="t" style="left:716.0px;top:302.06px;width:38.2px;overflow:hidden;font-size:5.1px;transform:scaleX(0.87);transform-origin:0 0;color:#1e1e1e">100</div>
<div class="a" style="left:678.3px;top:308.33px;width:71.20000000000005px;height:7.27px;background:#fff;border-bottom:0.5px solid #e2e2e2"></div>
<div class="a" style="left:714.8px;top:308.33px;width:0.5px;height:7.27px;background:#e2e2e2"></div>
<div class="t" style="left:679.1px;top:309.33px;width:40.8px;overflow:hidden;font-size:5.1px;transform:scaleX(0.87);transform-origin:0 0;color:#1e1e1e">Sound stretching</div>
<div class="t" style="left:716.0px;top:309.33px;width:38.2px;overflow:hidden;font-size:5.1px;transform:scaleX(0.87);transform-origin:0 0;color:#1e1e1e">Tempo change</div>
<svg style="left:673px;top:310.13px" width="4" height="4" viewBox="0 0 4 4"><path d="M1 0.6 L3 2 L1 3.4Z" fill="none" stroke="#c4c4c4" stroke-width="0.4"/></svg>
<div class="a" style="left:678.3px;top:315.60px;width:71.20000000000005px;height:7.27px;background:#fff;border-bottom:0.5px solid #e2e2e2"></div>
<div class="a" style="left:714.8px;top:315.60px;width:0.5px;height:7.27px;background:#e2e2e2"></div>
<div class="t" style="left:679.1px;top:316.60px;width:40.8px;overflow:hidden;font-size:5.1px;transform:scaleX(0.87);transform-origin:0 0;color:#1e1e1e">Stretch video</div>
<div class="t" style="left:716.0px;top:316.60px;width:38.2px;overflow:hidden;font-size:5.1px;transform:scaleX(0.87);transform-origin:0 0;color:#1e1e1e">No</div>
<div class="a" style="left:678.3px;top:322.87px;width:71.20000000000005px;height:7.27px;background:#fff;border-bottom:0.5px solid #e2e2e2"></div>
<div class="a" style="left:714.8px;top:322.87px;width:0.5px;height:7.27px;background:#e2e2e2"></div>
<div class="t" style="left:679.1px;top:323.87px;width:40.8px;overflow:hidden;font-size:5.1px;transform:scaleX(0.87);transform-origin:0 0;color:#1e1e1e">Resize mode</div>
<div class="t" style="left:716.0px;top:323.87px;width:38.2px;overflow:hidden;font-size:5.1px;transform:scaleX(0.87);transform-origin:0 0;color:#1e1e1e">Linear interpolat</div>
<div class="a" style="left:678.3px;top:330.14px;width:77.70000000000005px;height:7.27px;background:#fff;border-bottom:0.5px solid #e2e2e2"></div>
<div class="a" style="left:714.8px;top:330.14px;width:0.5px;height:7.27px;background:#e2e2e2"></div>
<div class="t" style="left:679.1px;top:331.14px;width:40.8px;overflow:hidden;font-size:5.1px;transform:scaleX(0.87);transform-origin:0 0;color:#1e1e1e">Loop mode</div>
<div class="t" style="left:716.0px;top:331.14px;width:45.6px;overflow:hidden;font-size:5.1px;transform:scaleX(0.87);transform-origin:0 0;color:#1e1e1e">Show last frame</div>
<svg style="left:751px;top:332.74px" width="4" height="3" viewBox="0 0 4 3"><path d="M0.5 0.5 H3.5 L2 2.2Z" fill="#444"/></svg>
<div class="a" style="left:670px;top:336px;width:87px;height:0.8px;background:#9a9a9a"></div>
<div class="a" id="prdesc"></div>
<div class="a" id="prtabs"></div>
<div class="a" style="left:673.5px;top:363.6px;width:40px;height:8.6px;background:#d4d4d4"></div>
<svg style="left:675px;top:364.8px" width="50" height="7" viewBox="0 0 50 7"><rect x="0" y="0" width="6" height="6" fill="#eef4fa" stroke="#3a8ad8" stroke-width="0.5"/><rect x="0" y="0" width="6" height="1.4" fill="#3a8ad8"/><rect x="42.5" y="0" width="6" height="6" fill="#f0d060"/><rect x="42.5" y="0" width="6" height="2" fill="#40a0e0"/><rect x="42.5" y="4" width="6" height="2" fill="#40b060"/></svg>
<div class="t" style="left:682.5px;top:365.4px;font-size:5px;color:#1e1e1e">Properties ...</div>
<div class="t" style="left:725px;top:365.4px;font-size:5px;color:#cfcfcf">Resources ...</div>
<div class="t" style="left:448.3px;top:376.2px;font-size:5px;color:#d4d4d4">Position</div>
<div class="t" style="left:469.6px;top:376.2px;font-size:4.6px;color:#d4d4d4">00:00:01.960</div>
<div class="t" style="left:502.2px;top:376.2px;font-size:4.85px;color:#d4d4d4">Start selection:</div>
<div class="t" style="left:537.2px;top:376.2px;font-size:4.6px;color:#d4d4d4">00:00:00.000</div>
<div class="t" style="left:570px;top:376.2px;font-size:4.6px;color:#d4d4d4">End selection:</div>
<div class="t" style="left:602.7px;top:376.2px;font-size:4.6px;color:#d4d4d4">00:00:00.000</div>
<div class="t" style="left:637px;top:376.2px;font-size:4.75px;color:#d4d4d4">Zoom To Screen</div>
<div class="t" style="left:679.7px;top:376.2px;font-size:5px;color:#d4d4d4">35%</div>
<svg style="left:692px;top:374px" width="66" height="9" viewBox="0 0 66 9"><circle cx="4.8" cy="4.5" r="2.7" fill="#d8d8d8"/><rect x="3.2" y="4" width="3.2" height="1" fill="#555"/><path d="M9 4.8 H50" stroke="#666" stroke-width="0.4"/><path d="M13.8 2.2 H16.2 V5.2 L15 6.2 L13.8 5.2Z" fill="#d8d8d8"/><circle cx="53" cy="4.5" r="2.7" fill="#d8d8d8"/><path d="M51.3 4.5 H54.7 M53 2.8 V6.2" stroke="#555" stroke-width="0.9"/></svg>
<div class="a" style="left:169.5px;top:88px;width:67px;height:230px;background:rgba(0,0,0,0.18);filter:blur(1px)"></div>
<div class="a" style="left:168.5px;top:87px;width:66.5px;height:229.8px;background:#fff;border:0.5px solid #b8b8b8"></div>
<div class="a" style="left:179.5px;top:88px;width:0.6px;height:228px;background:#ececec"></div>
<svg style="left:169.6px;top:87.4px" width="10" height="10" viewBox="0 0 10 10"><rect x="0.3" y="0.3" width="9.4" height="9.4" rx="1" fill="#fff3d0" stroke="#f0a040" stroke-width="0.6"/><rect x="1.4" y="1.4" width="4.6" height="4.6" fill="#1a6fd0"/><rect x="3.8" y="3.8" width="4.8" height="4.8" fill="#e8203a"/></svg>
<div class="t" style="left:183.3px;top:89.6px;font-size:5px;color:#4a4a4a">Blend</div>
<div class="a" style="left:183px;top:97.5px;width:51px;height:0.6px;background:#dadada"></div>
<svg style="left:170px;top:98.3px" width="9" height="9" viewBox="0 0 9 9"><rect x="1" y="0.5" width="4.5" height="4.5" fill="#1a6fd0"/><rect x="3.5" y="3" width="4.5" height="4.5" fill="none" stroke="#f08090" stroke-width="0.5"/></svg>
<div class="t" style="left:183.3px;top:99.89999999999999px;font-size:5px;color:#4a4a4a">Mask</div>
<svg style="left:170px;top:107.7px" width="9" height="9" viewBox="0 0 9 9"><rect x="1" y="0.5" width="4.5" height="4.5" fill="#7ab8e8"/><rect x="3" y="2.5" width="2.5" height="2.5" fill="#1a4fb0"/><rect x="3.5" y="3" width="4.5" height="4.5" fill="none" stroke="#f08090" stroke-width="0.5"/></svg>
<div class="t" style="left:183.3px;top:109.3px;font-size:5px;color:#4a4a4a">Inverted mask</div>
<div class="t" style="left:183.3px;top:118.39999999999999px;font-size:5px;color:#4a4a4a">Mask settings</div>
<svg style="left:227.5px;top:118.8px" width="3" height="4" viewBox="0 0 3 4"><path d="M0.6 0.4 L2.4 2 L0.6 3.6Z" fill="#333"/></svg>
<div class="a" style="left:183px;top:126.8px;width:51px;height:0.6px;background:#dadada"></div>
<svg style="left:170px;top:128.1px" width="9" height="9" viewBox="0 0 9 9"><rect x="1" y="0.8" width="4.6" height="4.6" fill="#666"/><rect x="3.4" y="3.2" width="4.6" height="4.6" fill="#eee" stroke="#444" stroke-width="0.4"/></svg>
<div class="t" style="left:183.3px;top:129.7px;font-size:5px;color:#4a4a4a">Clear</div>
<svg style="left:170px;top:137px" width="9" height="9" viewBox="0 0 9 9"><rect x="1" y="0.8" width="4.6" height="4.6" fill="#555"/><rect x="3.4" y="3.2" width="4.6" height="4.6" fill="#eee" stroke="#444" stroke-width="0.4"/></svg>
<div class="t" style="left:183.3px;top:138.6px;font-size:5px;color:#4a4a4a">Source</div>
<svg style="left:170px;top:146.5px" width="9" height="9" viewBox="0 0 9 9"><rect x="1" y="0.8" width="4.6" height="4.6" fill="#666"/><rect x="3.4" y="3.2" width="4.6" height="4.6" fill="#999" stroke="#444" stroke-width="0.4"/></svg>
<div class="t" style="left:183.3px;top:148.1px;font-size:5px;color:#4a4a4a">Destination</div>
<svg style="left:170px;top:156px" width="9" height="9" viewBox="0 0 9 9"><rect x="1" y="0.8" width="4.6" height="4.6" fill="#555"/><rect x="3.4" y="3.2" width="4.6" height="4.6" fill="#eee" stroke="#444" stroke-width="0.4"/></svg>
<div class="t" style="left:183.3px;top:157.6px;font-size:5px;color:#4a4a4a">Source over</div>
<svg style="left:170px;top:165.3px" width="9" height="9" viewBox="0 0 9 9"><rect x="1" y="0.8" width="4.6" height="4.6" fill="#666"/><rect x="3.4" y="3.2" width="4.6" height="4.6" fill="#eee" stroke="#444" stroke-width="0.4"/></svg>
<div class="t" style="left:183.3px;top:166.9px;font-size:5px;color:#4a4a4a">Destination over</div>
<div class="a" style="left:167px;top:173px;width:70px;height:12.5px;border:1.6px solid #d01818;background:#fff"></div>
<div class="a" style="left:168.8px;top:174.8px;width:66.4px;height:8.9px;background:linear-gradient(#fff4c8,#fde9a0 50%,#f8d878);border:0.5px solid #e8c060"></div>
<svg style="left:170px;top:174.7px" width="9" height="9" viewBox="0 0 9 9"><rect x="1" y="0.8" width="4.6" height="4.6" fill="#555"/><rect x="3.4" y="3.2" width="4.6" height="4.6" fill="#999" stroke="#444" stroke-width="0.4"/></svg>
<div class="t" style="left:183.3px;top:176.29999999999998px;font-size:5px;color:#4a4a4a">Source in</div>
<svg style="left:170px;top:184px" width="9" height="9" viewBox="0 0 9 9"><rect x="1" y="0.8" width="4.6" height="4.6" fill="#666"/><rect x="3.4" y="3.2" width="4.6" height="4.6" fill="#eee" stroke="#444" stroke-width="0.4"/></svg>
<div class="t" style="left:183.3px;top:185.6px;font-size:5px;color:#4a4a4a">Destination in</div>
<svg style="left:170px;top:193.5px" width="9" height="9" viewBox="0 0 9 9"><rect x="1" y="0.8" width="4.6" height="4.6" fill="#555"/><rect x="3.4" y="3.2" width="4.6" height="4.6" fill="#eee" stroke="#444" stroke-width="0.4"/></svg>
<div class="t" style="left:183.3px;top:195.1px;font-size:5px;color:#4a4a4a">Source out</div>
<svg style="left:170px;top:202.8px" width="9" height="9" viewBox="0 0 9 9"><rect x="1" y="0.8" width="4.6" height="4.6" fill="#666"/><rect x="3.4" y="3.2" width="4.6" height="4.6" fill="#999" stroke="#444" stroke-width="0.4"/></svg>
<div class="t" style="left:183.3px;top:204.4px;font-size:5px;color:#4a4a4a">Destination out</div>
<svg style="left:170px;top:212.2px" width="9" height="9" viewBox="0 0 9 9"><rect x="1" y="0.8" width="4.6" height="4.6" fill="#555"/><rect x="3.4" y="3.2" width="4.6" height="4.6" fill="#eee" stroke="#444" stroke-width="0.4"/></svg>
<div class="t" style="left:183.3px;top:213.79999999999998px;font-size:5px;color:#4a4a4a">Source atop</div>
<svg style="left:170px;top:221.6px" width="9" height="9" viewBox="0 0 9 9"><rect x="1" y="0.8" width="4.6" height="4.6" fill="#666"/><rect x="3.4" y="3.2" width="4.6" height="4.6" fill="#eee" stroke="#444" stroke-width="0.4"/></svg>
<div class="t" style="left:183.3px;top:223.2px;font-size:5px;color:#4a4a4a">Destination atop</div>
<div class="a" style="left:183px;top:230.5px;width:51px;height:0.6px;background:#dadada"></div>
<svg style="left:170px;top:232px" width="9" height="9" viewBox="0 0 9 9"><rect x="1" y="0.5" width="4.8" height="4.8" fill="#1a6fd0"/><circle cx="6" cy="6" r="2.3" fill="#c020a0"/></svg>
<div class="t" style="left:183.3px;top:233.6px;font-size:5px;color:#4a4a4a">Xor</div>
<svg style="left:170px;top:241.4px" width="9" height="9" viewBox="0 0 9 9"><rect x="1" y="0.5" width="4.8" height="4.8" fill="#1a6fd0"/><circle cx="6" cy="6" r="2.3" fill="#e8204a"/></svg>
<div class="t" style="left:183.3px;top:243.0px;font-size:5px;color:#4a4a4a">Plus</div>
<svg style="left:170px;top:250.8px" width="9" height="9" viewBox="0 0 9 9"><rect x="1" y="0.5" width="4.8" height="4.8" fill="#1a6fd0"/><circle cx="6" cy="6" r="2.3" fill="#111111"/></svg>
<div class="t" style="left:183.3px;top:252.4px;font-size:5px;color:#4a4a4a">Minus</div>
<svg style="left:170px;top:260.3px" width="9" height="9" viewBox="0 0 9 9"><rect x="1" y="0.5" width="4.8" height="4.8" fill="#1a6fd0"/><circle cx="6" cy="6" r="2.3" fill="#e8204a"/></svg>
<div class="t" style="left:183.3px;top:261.90000000000003px;font-size:5px;color:#4a4a4a">Multiply</div>
<svg style="left:170px;top:269.7px" width="9" height="9" viewBox="0 0 9 9"><rect x="1" y="0.5" width="4.8" height="4.8" fill="#1a6fd0"/><circle cx="6" cy="6" r="2.3" fill="#e8204a"/></svg>
<div class="t" style="left:183.3px;top:271.3px;font-size:5px;color:#4a4a4a">Screen</div>
<svg style="left:170px;top:279.2px" width="9" height="9" viewBox="0 0 9 9"><rect x="1" y="0.5" width="4.8" height="4.8" fill="#1a6fd0"/><circle cx="6" cy="6" r="2.3" fill="#e8204a"/></svg>
<div class="t" style="left:183.3px;top:280.8px;font-size:5px;color:#4a4a4a">Overlay</div>
<svg style="left:170px;top:288.6px" width="9" height="9" viewBox="0 0 9 9"><rect x="1" y="0.5" width="4.8" height="4.8" fill="#1a6fd0"/><circle cx="6" cy="6" r="2.3" fill="#b01838"/></svg>
<div class="t" style="left:183.3px;top:290.20000000000005px;font-size:5px;color:#4a4a4a">Darken</div>
<svg style="left:170px;top:298px" width="9" height="9" viewBox="0 0 9 9"><rect x="1" y="0.5" width="4.8" height="4.8" fill="#1a6fd0"/><circle cx="6" cy="6" r="2.3" fill="#e020c0"/></svg>
<div class="t" style="left:183.3px;top:299.6px;font-size:5px;color:#4a4a4a">Lighten</div>
<div class="t" style="left:183.3px;top:309.0px;font-size:5px;color:#4a4a4a">More...</div>
<svg style="left:227.5px;top:309.4px" width="3" height="4" viewBox="0 0 3 4"><path d="M0.6 0.4 L2.4 2 L0.6 3.6Z" fill="#333"/></svg>
</body></html>
